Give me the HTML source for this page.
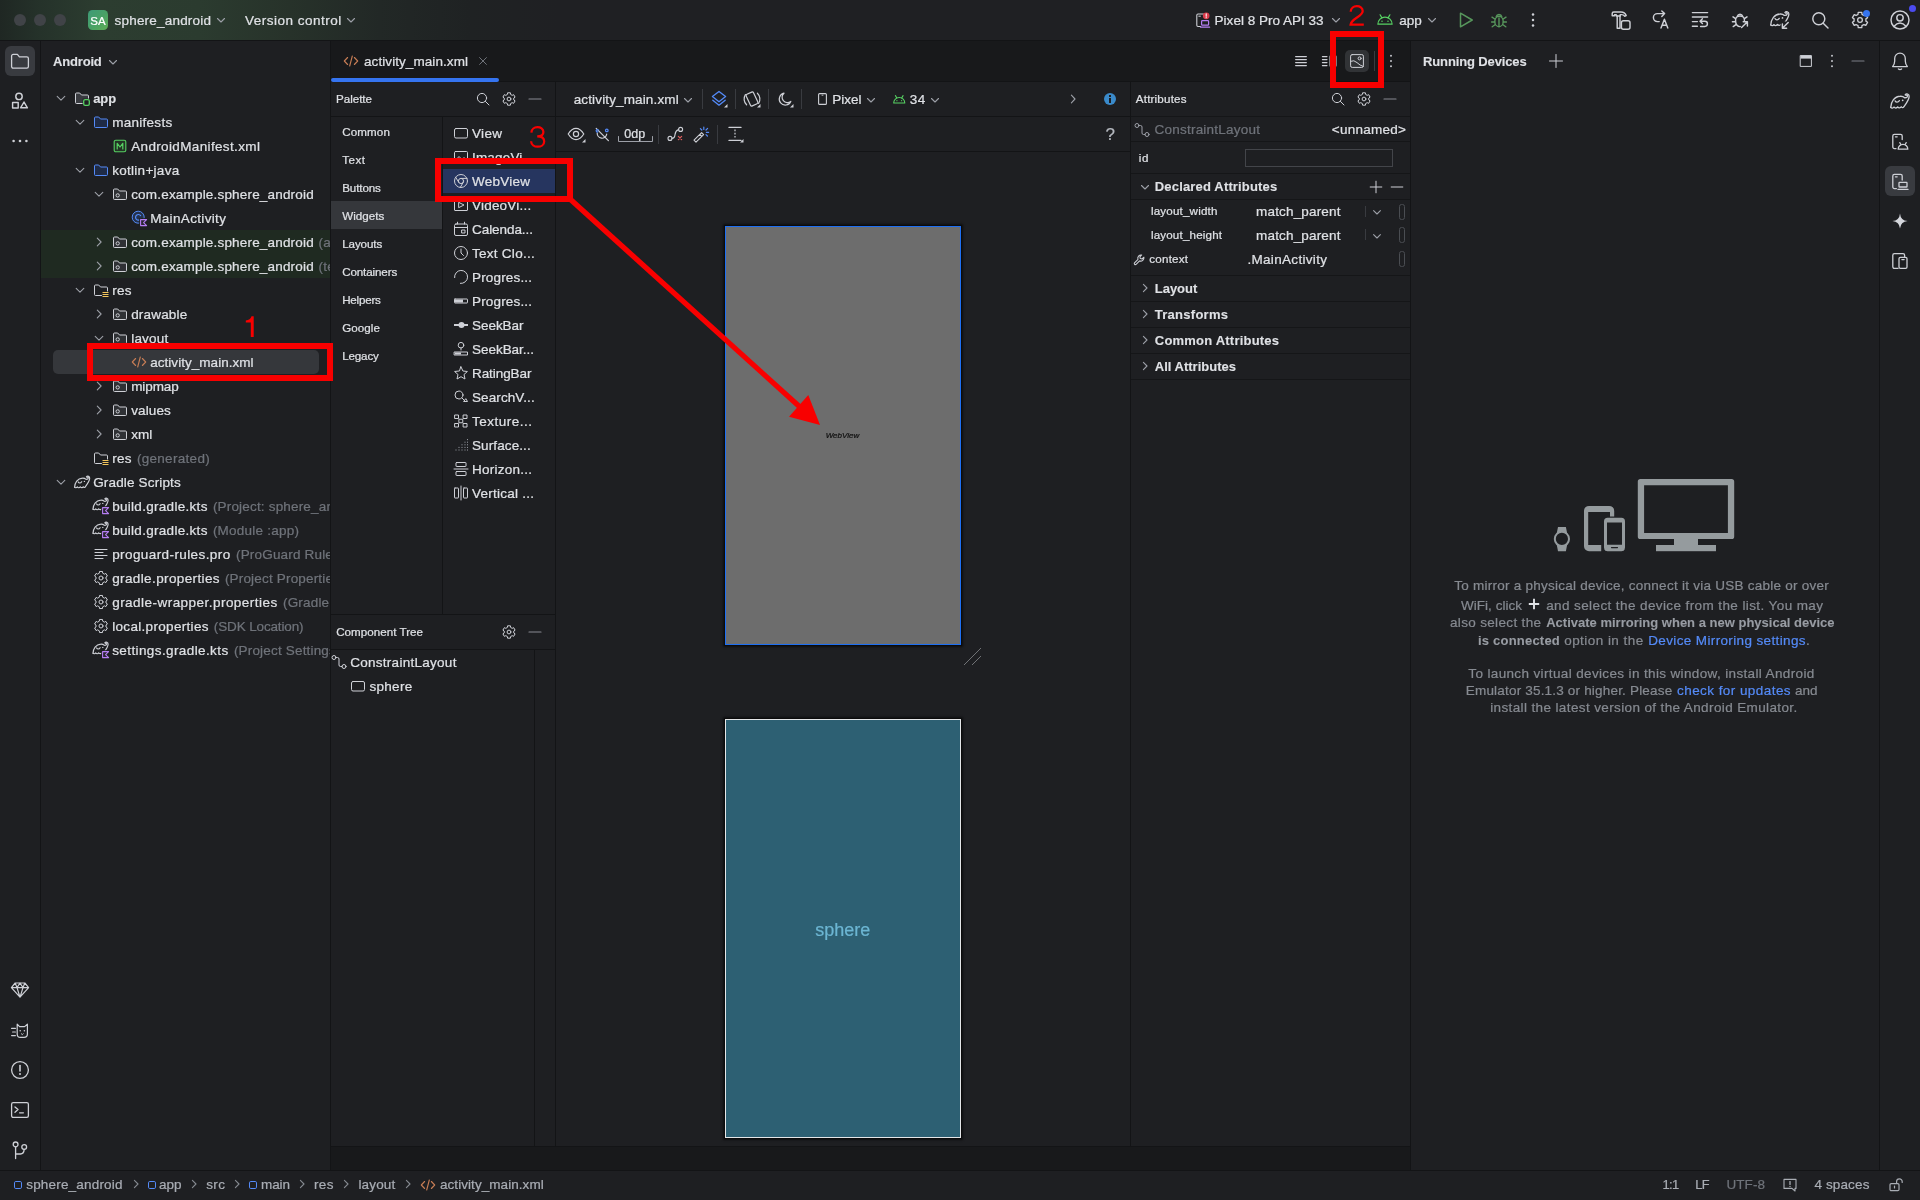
<!DOCTYPE html>
<html><head><meta charset="utf-8"><title>Android Studio</title>
<style>
html,body{margin:0;padding:0;}
body{width:1920px;height:1200px;overflow:hidden;background:#1e1f22;font-family:"Liberation Sans",sans-serif;position:relative;}
svg{overflow:visible}
#root{position:absolute;left:0;top:0;width:1920px;height:1200px;overflow:hidden;will-change:transform;}
</style></head><body><div id="root">
<div style="position:absolute;left:0;top:0;width:1920px;height:40px;background:linear-gradient(90deg,#1f2723 0px,#25322a 40px,#2c3d30 100px,#2b3b2f 200px,#27322a 290px,#222826 380px,#1f2223 470px,#1f2023 560px);"></div>
<div style="position:absolute;left:0px;top:40px;width:1920px;height:1px;background:#131416;"></div>
<div style="position:absolute;left:14px;top:14px;width:12px;height:12px;border-radius:6px;background:#404347"></div>
<div style="position:absolute;left:34px;top:14px;width:12px;height:12px;border-radius:6px;background:#404347"></div>
<div style="position:absolute;left:54px;top:14px;width:12px;height:12px;border-radius:6px;background:#404347"></div>
<div style="position:absolute;left:88px;top:10px;width:20px;height:20px;border-radius:4.5px;background:linear-gradient(135deg,#3d9a78 0%,#4aa265 55%,#5fae55 100%);"></div>
<div style="position:absolute;left:90.3px;top:11.30px;height:20px;line-height:20px;font-size:11.5px;font-weight:400;color:#ffffff;white-space:nowrap;letter-spacing:0.056px;-webkit-text-stroke:0.22px #ffffff;">SA</div>
<div style="position:absolute;left:114.5px;top:11.00px;height:20px;line-height:20px;font-size:13.5px;font-weight:400;color:#dfe1e5;white-space:nowrap;letter-spacing:0.206px;-webkit-text-stroke:0.22px #dfe1e5;">sphere_android</div>
<svg style="position:absolute;left:213.0px;top:12.3px;" width="16" height="16" viewBox="0 0 16 16" fill="none"><path d="M4.5 6.5 L8 10 L11.5 6.5" stroke="#9da0a8" stroke-width="1.1" stroke-linecap="round" stroke-linejoin="round" fill="none" /></svg>
<div style="position:absolute;left:245px;top:11.00px;height:20px;line-height:20px;font-size:13.5px;font-weight:400;color:#dfe1e5;white-space:nowrap;letter-spacing:0.492px;-webkit-text-stroke:0.22px #dfe1e5;">Version control</div>
<svg style="position:absolute;left:343.3px;top:12.3px;" width="16" height="16" viewBox="0 0 16 16" fill="none"><path d="M4.5 6.5 L8 10 L11.5 6.5" stroke="#9da0a8" stroke-width="1.1" stroke-linecap="round" stroke-linejoin="round" fill="none" /></svg>
<svg style="position:absolute;left:1195.4px;top:11.6px;" width="16" height="17" viewBox="0 0 16 17" fill="none"><path d="M5.5 14.5 H3 a1.2 1.2 0 0 1-1.2-1.2 V3.2 A1.2 1.2 0 0 1 3 2 h5.5" stroke="#ced0d6" stroke-width="1.1" stroke-linecap="round" stroke-linejoin="round" fill="none" /><path d="M3.8 4.2 h1.6" stroke="#ced0d6" stroke-width="1" stroke-linecap="round" stroke-linejoin="round" fill="none" /><rect x="6.6" y="8.6" width="7" height="4.6" rx="0.8" stroke="#b57ef3" stroke-width="1.2" stroke-linecap="round" stroke-linejoin="round" fill="none" /><path d="M5.6 15.2 h9" stroke="#b57ef3" stroke-width="1.2" stroke-linecap="round" stroke-linejoin="round" fill="none" /><circle cx="11.2" cy="3.8" r="3.35" fill="#db3b4b"/><path d="M11.2 1.9 V4.2" stroke="#fff" stroke-width="1.1" stroke-linecap="round"/><circle cx="11.2" cy="5.7" r="0.6" fill="#fff"/></svg>
<div style="position:absolute;left:1214.6px;top:11.00px;height:20px;line-height:20px;font-size:13.5px;font-weight:400;color:#dfe1e5;white-space:nowrap;letter-spacing:0.011px;-webkit-text-stroke:0.22px #dfe1e5;">Pixel 8 Pro API 33</div>
<svg style="position:absolute;left:1328.0px;top:12.3px;" width="16" height="16" viewBox="0 0 16 16" fill="none"><path d="M4.5 6.5 L8 10 L11.5 6.5" stroke="#9da0a8" stroke-width="1.1" stroke-linecap="round" stroke-linejoin="round" fill="none" /></svg>
<svg style="position:absolute;left:1377.1px;top:14.3px;" width="16" height="11" viewBox="0 0 16 11" fill="none"><path d="M0.9 10.2 A7.1 7.1 0 0 1 15.1 10.2 Z" stroke="#57d163" stroke-width="1.2" stroke-linecap="round" stroke-linejoin="round" fill="none" /><path d="M3.1 0.8 L4.9 3.9 M12.9 0.8 L11.1 3.9" stroke="#57d163" stroke-width="1.2" stroke-linecap="round" stroke-linejoin="round" fill="none" /><circle cx="5" cy="7.3" r="0.75" fill="#57d163"/><circle cx="11" cy="7.3" r="0.75" fill="#57d163"/></svg>
<div style="position:absolute;left:1399.3px;top:11.00px;height:20px;line-height:20px;font-size:13.5px;font-weight:400;color:#dfe1e5;white-space:nowrap;letter-spacing:-0.016px;-webkit-text-stroke:0.22px #dfe1e5;">app</div>
<svg style="position:absolute;left:1424.0px;top:12.3px;" width="16" height="16" viewBox="0 0 16 16" fill="none"><path d="M4.5 6.5 L8 10 L11.5 6.5" stroke="#9da0a8" stroke-width="1.1" stroke-linecap="round" stroke-linejoin="round" fill="none" /></svg>
<svg style="position:absolute;left:1455.5px;top:10.0px;" width="20" height="20" viewBox="0 0 20 20" fill="none"><path d="M4.5 3.2 L16.2 10 L4.5 16.8 Z" stroke="#57965c" stroke-width="1.5" stroke-linecap="round" stroke-linejoin="round" fill="none" /></svg>
<svg style="position:absolute;left:1489.0px;top:10.0px;" width="20" height="20" viewBox="0 0 20 20" fill="none"><ellipse cx="10" cy="11.5" rx="4.2" ry="5.2" stroke="#57965c" stroke-width="1.4" stroke-linecap="round" stroke-linejoin="round" fill="none" /><path d="M7.2 6.6 A2.9 2.9 0 0 1 12.8 6.6 M10 8 V16.5 M5.8 9 L3 7.2 M14.2 9 L17 7.2 M5.6 12 H2.6 M14.4 12 H17.4 M6 14.8 L3.2 16.8 M14 14.8 L16.8 16.8" stroke="#57965c" stroke-width="1.4" stroke-linecap="round" stroke-linejoin="round" fill="none" /></svg>
<svg style="position:absolute;left:1523.3px;top:10.0px;" width="20" height="20" viewBox="0 0 20 20" fill="none"><circle cx="10" cy="4.6" r="1.25" fill="#ced0d6"/><circle cx="10" cy="10" r="1.25" fill="#ced0d6"/><circle cx="10" cy="15.4" r="1.25" fill="#ced0d6"/></svg>
<svg style="position:absolute;left:1610.5px;top:10.0px;" width="20" height="20" viewBox="0 0 20 20" fill="none"><path d="M1.2 5.8 V3.4 Q1.2 2 2.8 2 H10 Q13.8 2 15.2 5.6 L13.6 6.2 Q12.6 4.6 10.6 4.6 H9.2 V6 H5.2 V4.6 H3.6 V5.8 Z" stroke="#ced0d6" stroke-width="1.45" stroke-linecap="round" stroke-linejoin="round" fill="none" /><path d="M6.2 6 V18.2 H9 V6" stroke="#ced0d6" stroke-width="1.45" stroke-linecap="round" stroke-linejoin="round" fill="none" /><rect x="10.4" y="10.8" width="8.6" height="8.4" rx="2" fill="#1f2023" stroke="#ced0d6" stroke-width="1.45" stroke-linecap="round" stroke-linejoin="round" /></svg>
<svg style="position:absolute;left:1650.5px;top:10.0px;" width="20" height="20" viewBox="0 0 20 20" fill="none"><path d="M8.2 11.6 H6.4 A4 4 0 0 1 6.4 3.6 H13.6 M10.8 0.9 L13.6 3.6 L10.8 6.4" stroke="#ced0d6" stroke-width="1.45" stroke-linecap="round" stroke-linejoin="round" fill="none" /><path d="M10 18 L13.4 9.2 L16.8 18 M11.2 15.2 H15.6" stroke="#ced0d6" stroke-width="1.45" stroke-linecap="round" stroke-linejoin="round" fill="none" /></svg>
<svg style="position:absolute;left:1690.0px;top:10.0px;" width="20" height="20" viewBox="0 0 20 20" fill="none"><path d="M2.4 2.6 H17.6 M2.4 7 H17.6 M2.4 11.6 H7.4 M2.4 16.2 H7.4" stroke="#ced0d6" stroke-width="1.45" stroke-linecap="round" stroke-linejoin="round" fill="none" /><path d="M10.6 16.4 H14.8 A2.6 2.6 0 0 0 14.8 11.2 H10.2 M12.4 8.8 L10 11.2 L12.4 13.6" stroke="#ced0d6" stroke-width="1.45" stroke-linecap="round" stroke-linejoin="round" fill="none" /></svg>
<svg style="position:absolute;left:1730.0px;top:10.0px;" width="20" height="20" viewBox="0 0 20 20" fill="none"><path d="M10.2 16.6 A4.3 5.4 0 0 1 5.6 11.4 V9.6 A4.4 3.6 0 0 1 14.4 9.6 V10.4" stroke="#ced0d6" stroke-width="1.45" stroke-linecap="round" stroke-linejoin="round" fill="none" /><path d="M7.4 6.2 A2.7 2.7 0 0 1 12.6 6.2 M5.6 8.6 L3 6.8 M14.4 8.6 L17 6.8 M5.4 11.8 H2.4 M5.9 14.6 L3.2 16.6" stroke="#ced0d6" stroke-width="1.45" stroke-linecap="round" stroke-linejoin="round" fill="none" /><path d="M11.6 17.6 L17.4 11.8 M13.2 11.8 H17.4 V16" stroke="#ced0d6" stroke-width="1.45" stroke-linecap="round" stroke-linejoin="round" fill="none" /></svg>
<svg style="position:absolute;left:1770px;top:10.5px;" width="20" height="20" viewBox="0 0 20 20" fill="none"><g transform="scale(1.2) translate(0,-1.2)"><path d="M0.6 12.8 C0.8 8.4 3.4 3.9 8.4 3.7 C10 3.6 11.2 4.1 12 4.9 C13.2 5 14.2 4.4 14.4 3.5 C14.5 2.7 13.6 2.4 13.1 3" stroke="#ced0d6" stroke-width="1.08" stroke-linecap="round" stroke-linejoin="round" fill="none" /><path d="M12.4 2.5 C13.4 1.2 15.9 1.8 15.7 4 C15.5 6.4 13.8 9 11.6 12 C11 13.2 9.8 13.3 9.2 12.3 C8.6 13.5 7 13.6 6.3 12.4 C5.6 13.6 4 13.6 3.3 12.5 C2.6 13.6 1.2 13.6 0.6 12.8" stroke="#ced0d6" stroke-width="1.08" stroke-linecap="round" stroke-linejoin="round" fill="none" /><path d="M4.2 7.5 C4.9 8.9 6.6 9 7.7 7.3" stroke="#ced0d6" stroke-width="1.08" stroke-linecap="round" stroke-linejoin="round" fill="none" /><circle cx="10.4" cy="7" r="0.7" fill="#ced0d6"/></g><rect x="10.5" y="10.5" width="9" height="9" fill="#1f2023"/><path d="M18.2 11.4 L12.4 17.2 M12.4 13 V17.2 H16.6" stroke="#ced0d6" stroke-width="1.45" stroke-linecap="round" stroke-linejoin="round" fill="none" /></svg>
<svg style="position:absolute;left:1810.0px;top:10.0px;" width="20" height="20" viewBox="0 0 20 20" fill="none"><circle cx="8.8" cy="8.8" r="6" stroke="#ced0d6" stroke-width="1.45" stroke-linecap="round" stroke-linejoin="round" fill="none" /><path d="M13.2 13.2 L18 18" stroke="#ced0d6" stroke-width="1.45" stroke-linecap="round" stroke-linejoin="round" fill="none" /></svg>
<svg style="position:absolute;left:1850.0px;top:10.0px;" width="20" height="20" viewBox="0 0 20 20" fill="none"><g transform="translate(10,10) scale(1.18) translate(-8,-8)"><path d="M6.49 1.47 L9.51 1.47 L9.66 3.18 L11.35 4.15 L12.90 3.43 L14.41 6.04 L13.01 7.03 L13.01 8.97 L14.41 9.96 L12.90 12.57 L11.35 11.85 L9.66 12.82 L9.51 14.53 L6.49 14.53 L6.34 12.82 L4.65 11.85 L3.10 12.57 L1.59 9.96 L2.99 8.97 L2.99 7.03 L1.59 6.04 L3.10 3.43 L4.65 4.15 L6.34 3.18 Z" stroke="#ced0d6" stroke-width="1.1" stroke-linejoin="round" fill="none"/><circle cx="8" cy="8" r="2.0" stroke="#ced0d6" stroke-width="1.1" stroke-linecap="round" stroke-linejoin="round" fill="none" /></g></svg>
<div style="position:absolute;left:1863px;top:9.8px;width:7px;height:7px;border-radius:3.5px;background:#3574f0"></div>
<svg style="position:absolute;left:1889.5px;top:10.0px;" width="20" height="20" viewBox="0 0 20 20" fill="none"><circle cx="10" cy="10" r="9" stroke="#ced0d6" stroke-width="1.45" stroke-linecap="round" stroke-linejoin="round" fill="none" /><circle cx="10" cy="7.8" r="3.2" stroke="#ced0d6" stroke-width="1.45" stroke-linecap="round" stroke-linejoin="round" fill="none" /><path d="M3.8 16.4 Q10 9.6 16.2 16.4" stroke="#ced0d6" stroke-width="1.45" stroke-linecap="round" stroke-linejoin="round" fill="none" /></svg>
<div style="position:absolute;left:1908.5px;top:4.5px;width:7px;height:7px;border-radius:3.5px;background:#4b4bf0"></div>
<div style="position:absolute;left:40px;top:41px;width:1px;height:1129px;background:#131416;"></div>
<div style="position:absolute;left:5px;top:46px;width:30px;height:30px;background:#393b40;border-radius:6px;"></div>
<svg style="position:absolute;left:10.0px;top:51.0px;" width="20" height="20" viewBox="0 0 20 20" fill="none"><path d="M1.6 5 a1.6 1.6 0 0 1 1.6-1.6 h4.2 l2 2.4 h7.4 a1.6 1.6 0 0 1 1.6 1.6 v8.2 a1.6 1.6 0 0 1-1.6 1.6 h-13.6 a1.6 1.6 0 0 1-1.6-1.6 z" stroke="#ced0d6" stroke-width="1.3" stroke-linecap="round" stroke-linejoin="round" fill="none" /></svg>
<svg style="position:absolute;left:10.0px;top:91.0px;" width="20" height="20" viewBox="0 0 20 20" fill="none"><circle cx="9" cy="5.4" r="3.2" stroke="#ced0d6" stroke-width="1.45" stroke-linecap="round" stroke-linejoin="round" fill="none" /><rect x="2.6" y="11.4" width="5.6" height="5.6" stroke="#ced0d6" stroke-width="1.45" stroke-linecap="round" stroke-linejoin="round" fill="none" /><path d="M14 11 L17.4 16.8 H10.6 Z" stroke="#ced0d6" stroke-width="1.45" stroke-linecap="round" stroke-linejoin="round" fill="none" /></svg>
<svg style="position:absolute;left:10.0px;top:131.0px;" width="20" height="20" viewBox="0 0 20 20" fill="none"><circle cx="3.6" cy="10" r="1.3" fill="#ced0d6"/><circle cx="10" cy="10" r="1.3" fill="#ced0d6"/><circle cx="16.4" cy="10" r="1.3" fill="#ced0d6"/></svg>
<svg style="position:absolute;left:10.0px;top:980.0px;" width="20" height="20" viewBox="0 0 20 20" fill="none"><path d="M5.2 3 H14.8 L18.6 7.6 L10 17.2 L1.4 7.6 Z M1.4 7.6 H18.6 M5.2 3 L7 7.6 L10 17.2 L13 7.6 L14.8 3 M10 3 L7 7.6 M10 3 L13 7.6" stroke="#ced0d6" stroke-width="1.2" stroke-linecap="round" stroke-linejoin="round" fill="none" /></svg>
<svg style="position:absolute;left:10.0px;top:1020.5px;" width="20" height="20" viewBox="0 0 20 20" fill="none"><path d="M7.2 3.2 L9.6 5.6 H14.6 L17.4 3.2 V13 Q17.4 16.4 14 16.4 H10.4 Q7.2 16.4 7.2 13 Z" stroke="#ced0d6" stroke-width="1.2" stroke-linecap="round" stroke-linejoin="round" fill="none" /><path d="M1.6 7.4 H5.4 M2.6 11 H5.4 M1.6 14.6 H5.4" stroke="#ced0d6" stroke-width="1.2" stroke-linecap="round" stroke-linejoin="round" fill="none" /><circle cx="10.2" cy="9.8" r="0.8" fill="#ced0d6"/><circle cx="14.4" cy="9.8" r="0.8" fill="#ced0d6"/><path d="M11.4 12.8 L12.3 13.6 L13.2 12.8" stroke="#ced0d6" stroke-width="1" stroke-linecap="round" stroke-linejoin="round" fill="none" /></svg>
<svg style="position:absolute;left:10.0px;top:1060.0px;" width="20" height="20" viewBox="0 0 20 20" fill="none"><circle cx="10" cy="10" r="8.4" stroke="#ced0d6" stroke-width="1.3" stroke-linecap="round" stroke-linejoin="round" fill="none" /><path d="M10 5.6 V11" stroke="#ced0d6" stroke-width="1.6" stroke-linecap="round" stroke-linejoin="round" fill="none" /><circle cx="10" cy="14" r="1" fill="#ced0d6"/></svg>
<svg style="position:absolute;left:10.0px;top:1100.0px;" width="20" height="20" viewBox="0 0 20 20" fill="none"><rect x="1.6" y="2.6" width="16.8" height="14.8" rx="1.6" stroke="#ced0d6" stroke-width="1.3" stroke-linecap="round" stroke-linejoin="round" fill="none" /><path d="M5 7 L8 9.6 L5 12.2 M9.6 12.8 H13.4" stroke="#ced0d6" stroke-width="1.3" stroke-linecap="round" stroke-linejoin="round" fill="none" /></svg>
<svg style="position:absolute;left:10.0px;top:1139.5px;" width="20" height="20" viewBox="0 0 20 20" fill="none"><circle cx="5.6" cy="4.4" r="2.4" stroke="#ced0d6" stroke-width="1.3" stroke-linecap="round" stroke-linejoin="round" fill="none" /><circle cx="14.2" cy="7" r="2.4" stroke="#ced0d6" stroke-width="1.3" stroke-linecap="round" stroke-linejoin="round" fill="none" /><path d="M5.6 6.8 V18.6 M5.6 14 H10.4 Q13.8 14 14.2 9.4" stroke="#ced0d6" stroke-width="1.3" stroke-linecap="round" stroke-linejoin="round" fill="none" /></svg>
<div style="position:absolute;left:53px;top:52.00px;height:20px;line-height:20px;font-size:13px;font-weight:700;color:#dfe1e5;white-space:nowrap;letter-spacing:-0.171px;-webkit-text-stroke:0.1px #dfe1e5;">Android</div>
<svg style="position:absolute;left:105.0px;top:53.5px;" width="16" height="16" viewBox="0 0 16 16" fill="none"><path d="M4.5 6.5 L8 10 L11.5 6.5" stroke="#9da0a8" stroke-width="1.1" stroke-linecap="round" stroke-linejoin="round" fill="none" /></svg>
<div style="position:absolute;left:41px;top:230px;width:290px;height:48px;background:#1f2a21;"></div>
<div style="position:absolute;left:53px;top:350px;width:266px;height:24px;background:#35373b;border-radius:5px;"></div>
<svg style="position:absolute;left:53.0px;top:90.0px;" width="16" height="16" viewBox="0 0 16 16" fill="none"><path d="M4.2 6.3 L8 10.1 L11.8 6.3" stroke="#9da0a8" stroke-width="1.1" stroke-linecap="round" stroke-linejoin="round" fill="none" /></svg>
<svg style="position:absolute;left:74.2px;top:90px;" width="16" height="16" viewBox="0 0 16 16" fill="none"><path d="M9 13.5 h-6.5 a1 1 0 0 1-1-1 V4 a1 1 0 0 1 1-1 h3.2 l1.8 2 h6 a1 1 0 0 1 1 1 v3" fill="#393b40" stroke="#ced0d6" stroke-width="1" stroke-linecap="round" stroke-linejoin="round" fi/><rect x="8.6" y="8.6" width="7.4" height="7.4" fill="#1e1f22"/><rect x="9.7" y="9.7" width="5.6" height="5.6" rx="1.4" fill="#1e1f22" stroke="#57d163" stroke-width="1.3"/></svg>
<div style="position:absolute;left:93.2px;top:89.00px;height:20px;line-height:20px;font-size:13px;font-weight:700;color:#dfe1e5;white-space:nowrap;letter-spacing:-0.062px;-webkit-text-stroke:0.1px #dfe1e5;">app</div>
<svg style="position:absolute;left:72.0px;top:114.0px;" width="16" height="16" viewBox="0 0 16 16" fill="none"><path d="M4.2 6.3 L8 10.1 L11.8 6.3" stroke="#9da0a8" stroke-width="1.1" stroke-linecap="round" stroke-linejoin="round" fill="none" /></svg>
<svg style="position:absolute;left:93.2px;top:114px;" width="16" height="16" viewBox="0 0 16 16" fill="none"><path d="M1.5 4 a1 1 0 0 1 1-1 h3.2 l1.8 2 h6 a1 1 0 0 1 1 1 v6.5 a1 1 0 0 1-1 1 h-11 a1 1 0 0 1-1-1 z" fill="#1f2b46" stroke="#548af7" stroke-width="1" stroke-linejoin="round"/></svg>
<div style="position:absolute;left:112.2px;top:113.00px;height:20px;line-height:20px;font-size:13.5px;font-weight:400;color:#dfe1e5;white-space:nowrap;letter-spacing:0.277px;-webkit-text-stroke:0.22px #dfe1e5;">manifests</div>
<svg style="position:absolute;left:112.2px;top:138px;" width="16" height="16" viewBox="0 0 16 16" fill="none"><rect x="2.2" y="2.2" width="11.6" height="11.6" rx="1.6" fill="#233325" stroke="#57d163" stroke-width="1.1"/><path d="M5.2 10.9 V5.3 L8 9 L10.8 5.3 V10.9" stroke="#57d163" stroke-width="1.2" stroke-linecap="round" stroke-linejoin="round" fill="none" /></svg>
<div style="position:absolute;left:131.2px;top:137.00px;height:20px;line-height:20px;font-size:13.5px;font-weight:400;color:#dfe1e5;white-space:nowrap;letter-spacing:0.355px;-webkit-text-stroke:0.22px #dfe1e5;">AndroidManifest.xml</div>
<svg style="position:absolute;left:72.0px;top:162.0px;" width="16" height="16" viewBox="0 0 16 16" fill="none"><path d="M4.2 6.3 L8 10.1 L11.8 6.3" stroke="#9da0a8" stroke-width="1.1" stroke-linecap="round" stroke-linejoin="round" fill="none" /></svg>
<svg style="position:absolute;left:93.2px;top:162px;" width="16" height="16" viewBox="0 0 16 16" fill="none"><path d="M1.5 4 a1 1 0 0 1 1-1 h3.2 l1.8 2 h6 a1 1 0 0 1 1 1 v6.5 a1 1 0 0 1-1 1 h-11 a1 1 0 0 1-1-1 z" fill="#1f2b46" stroke="#548af7" stroke-width="1" stroke-linejoin="round"/></svg>
<div style="position:absolute;left:112.2px;top:161.00px;height:20px;line-height:20px;font-size:13.5px;font-weight:400;color:#dfe1e5;white-space:nowrap;letter-spacing:0.283px;-webkit-text-stroke:0.22px #dfe1e5;">kotlin+java</div>
<svg style="position:absolute;left:91.0px;top:186.0px;" width="16" height="16" viewBox="0 0 16 16" fill="none"><path d="M4.2 6.3 L8 10.1 L11.8 6.3" stroke="#9da0a8" stroke-width="1.1" stroke-linecap="round" stroke-linejoin="round" fill="none" /></svg>
<svg style="position:absolute;left:112.2px;top:186px;" width="16" height="16" viewBox="0 0 16 16" fill="none"><path d="M1.5 4 a1 1 0 0 1 1-1 h3.2 l1.8 2 h6 a1 1 0 0 1 1 1 v6.5 a1 1 0 0 1-1 1 h-11 a1 1 0 0 1-1-1 z" fill="#2f3135" stroke="#ced0d6" stroke-width="1" stroke-linejoin="round"/><circle cx="5.7" cy="9.4" r="1.65" fill="none" stroke="#ced0d6" stroke-width="1"/></svg>
<div style="position:absolute;left:131.2px;top:185.00px;height:20px;line-height:20px;font-size:13.5px;font-weight:400;color:#dfe1e5;white-space:nowrap;letter-spacing:0.186px;-webkit-text-stroke:0.22px #dfe1e5;">com.example.sphere_android</div>
<svg style="position:absolute;left:131.2px;top:210px;" width="16" height="16" viewBox="0 0 16 16" fill="none"><circle cx="7.2" cy="7.2" r="6" fill="#25324d" stroke="#548af7" stroke-width="1"/><path d="M9.6 5.6 a2.8 2.8 0 1 0 0 3.4" stroke="#548af7" stroke-width="1.2" stroke-linecap="round" stroke-linejoin="round" fill="none" /><rect x="8.2" y="8.2" width="8" height="8" fill="#1e1f22"/><path d="M9.6 9.6 h6 l-3 3 l3 3 h-6 z" fill="#2b2533" stroke="#b57ef3" stroke-width="1.1" stroke-linejoin="round"/></svg>
<div style="position:absolute;left:150.2px;top:209.00px;height:20px;line-height:20px;font-size:13.5px;font-weight:400;color:#dfe1e5;white-space:nowrap;letter-spacing:0.335px;-webkit-text-stroke:0.22px #dfe1e5;">MainActivity</div>
<svg style="position:absolute;left:91.0px;top:234.0px;" width="16" height="16" viewBox="0 0 16 16" fill="none"><path d="M6.3 4.2 L10.1 8 L6.3 11.8" stroke="#9da0a8" stroke-width="1.1" stroke-linecap="round" stroke-linejoin="round" fill="none" /></svg>
<svg style="position:absolute;left:112.2px;top:234px;" width="16" height="16" viewBox="0 0 16 16" fill="none"><path d="M1.5 4 a1 1 0 0 1 1-1 h3.2 l1.8 2 h6 a1 1 0 0 1 1 1 v6.5 a1 1 0 0 1-1 1 h-11 a1 1 0 0 1-1-1 z" fill="#2f3135" stroke="#ced0d6" stroke-width="1" stroke-linejoin="round"/><circle cx="5.7" cy="9.4" r="1.65" fill="none" stroke="#ced0d6" stroke-width="1"/></svg>
<div style="position:absolute;left:131.2px;top:233.00px;height:20px;line-height:20px;font-size:13.5px;font-weight:400;color:#dfe1e5;white-space:nowrap;letter-spacing:0.186px;-webkit-text-stroke:0.22px #dfe1e5;">com.example.sphere_android</div>
<div style="position:absolute;left:318.6px;top:233.00px;height:20px;line-height:20px;font-size:13.5px;font-weight:400;color:#6f737a;white-space:nowrap;letter-spacing:0.180px;-webkit-text-stroke:0.22px #6f737a;">(androidTest)</div>
<svg style="position:absolute;left:91.0px;top:258.0px;" width="16" height="16" viewBox="0 0 16 16" fill="none"><path d="M6.3 4.2 L10.1 8 L6.3 11.8" stroke="#9da0a8" stroke-width="1.1" stroke-linecap="round" stroke-linejoin="round" fill="none" /></svg>
<svg style="position:absolute;left:112.2px;top:258px;" width="16" height="16" viewBox="0 0 16 16" fill="none"><path d="M1.5 4 a1 1 0 0 1 1-1 h3.2 l1.8 2 h6 a1 1 0 0 1 1 1 v6.5 a1 1 0 0 1-1 1 h-11 a1 1 0 0 1-1-1 z" fill="#2f3135" stroke="#ced0d6" stroke-width="1" stroke-linejoin="round"/><circle cx="5.7" cy="9.4" r="1.65" fill="none" stroke="#ced0d6" stroke-width="1"/></svg>
<div style="position:absolute;left:131.2px;top:257.00px;height:20px;line-height:20px;font-size:13.5px;font-weight:400;color:#dfe1e5;white-space:nowrap;letter-spacing:0.186px;-webkit-text-stroke:0.22px #dfe1e5;">com.example.sphere_android</div>
<div style="position:absolute;left:318.6px;top:257.00px;height:20px;line-height:20px;font-size:13.5px;font-weight:400;color:#6f737a;white-space:nowrap;letter-spacing:0.180px;-webkit-text-stroke:0.22px #6f737a;">(test)</div>
<svg style="position:absolute;left:72.0px;top:282.0px;" width="16" height="16" viewBox="0 0 16 16" fill="none"><path d="M4.2 6.3 L8 10.1 L11.8 6.3" stroke="#9da0a8" stroke-width="1.1" stroke-linecap="round" stroke-linejoin="round" fill="none" /></svg>
<svg style="position:absolute;left:93.2px;top:282px;" width="16" height="16" viewBox="0 0 16 16" fill="none"><path d="M8.5 13.5 h-6 a1 1 0 0 1-1-1 V4 a1 1 0 0 1 1-1 h3.2 l1.8 2 h6 a1 1 0 0 1 1 1 v3" stroke="#ced0d6" stroke-width="1" stroke-linecap="round" stroke-linejoin="round" fill="none" /><path d="M9.5 10.5 h6 M9.5 12.5 h6 M9.5 14.5 h6" stroke="#f2c55c" stroke-width="1.1"/></svg>
<div style="position:absolute;left:112.2px;top:281.00px;height:20px;line-height:20px;font-size:13.5px;font-weight:400;color:#dfe1e5;white-space:nowrap;letter-spacing:0.217px;-webkit-text-stroke:0.22px #dfe1e5;">res</div>
<svg style="position:absolute;left:91.0px;top:306.0px;" width="16" height="16" viewBox="0 0 16 16" fill="none"><path d="M6.3 4.2 L10.1 8 L6.3 11.8" stroke="#9da0a8" stroke-width="1.1" stroke-linecap="round" stroke-linejoin="round" fill="none" /></svg>
<svg style="position:absolute;left:112.2px;top:306px;" width="16" height="16" viewBox="0 0 16 16" fill="none"><path d="M1.5 4 a1 1 0 0 1 1-1 h3.2 l1.8 2 h6 a1 1 0 0 1 1 1 v6.5 a1 1 0 0 1-1 1 h-11 a1 1 0 0 1-1-1 z" fill="#2f3135" stroke="#ced0d6" stroke-width="1" stroke-linejoin="round"/><circle cx="5.7" cy="9.4" r="1.65" fill="none" stroke="#ced0d6" stroke-width="1"/></svg>
<div style="position:absolute;left:131.2px;top:305.00px;height:20px;line-height:20px;font-size:13.5px;font-weight:400;color:#dfe1e5;white-space:nowrap;letter-spacing:0.172px;-webkit-text-stroke:0.22px #dfe1e5;">drawable</div>
<svg style="position:absolute;left:91.0px;top:330.0px;" width="16" height="16" viewBox="0 0 16 16" fill="none"><path d="M4.2 6.3 L8 10.1 L11.8 6.3" stroke="#9da0a8" stroke-width="1.1" stroke-linecap="round" stroke-linejoin="round" fill="none" /></svg>
<svg style="position:absolute;left:112.2px;top:330px;" width="16" height="16" viewBox="0 0 16 16" fill="none"><path d="M1.5 4 a1 1 0 0 1 1-1 h3.2 l1.8 2 h6 a1 1 0 0 1 1 1 v6.5 a1 1 0 0 1-1 1 h-11 a1 1 0 0 1-1-1 z" fill="#2f3135" stroke="#ced0d6" stroke-width="1" stroke-linejoin="round"/><circle cx="5.7" cy="9.4" r="1.65" fill="none" stroke="#ced0d6" stroke-width="1"/></svg>
<div style="position:absolute;left:131.2px;top:329.00px;height:20px;line-height:20px;font-size:13.5px;font-weight:400;color:#dfe1e5;white-space:nowrap;letter-spacing:0.194px;-webkit-text-stroke:0.22px #dfe1e5;">layout</div>
<svg style="position:absolute;left:131.2px;top:354px;" width="16" height="16" viewBox="0 0 16 16" fill="none"><path d="M4.6 4.5 L1.3 8 L4.6 11.5 M11.4 4.5 L14.7 8 L11.4 11.5 M9.3 3 L6.7 13" stroke="#c77d55" stroke-width="1.1" stroke-linecap="round" stroke-linejoin="round" fill="none" /></svg>
<div style="position:absolute;left:150.2px;top:353.00px;height:20px;line-height:20px;font-size:13.5px;font-weight:400;color:#dfe1e5;white-space:nowrap;letter-spacing:0.039px;-webkit-text-stroke:0.22px #dfe1e5;">activity_main.xml</div>
<svg style="position:absolute;left:91.0px;top:378.0px;" width="16" height="16" viewBox="0 0 16 16" fill="none"><path d="M6.3 4.2 L10.1 8 L6.3 11.8" stroke="#9da0a8" stroke-width="1.1" stroke-linecap="round" stroke-linejoin="round" fill="none" /></svg>
<svg style="position:absolute;left:112.2px;top:378px;" width="16" height="16" viewBox="0 0 16 16" fill="none"><path d="M1.5 4 a1 1 0 0 1 1-1 h3.2 l1.8 2 h6 a1 1 0 0 1 1 1 v6.5 a1 1 0 0 1-1 1 h-11 a1 1 0 0 1-1-1 z" fill="#2f3135" stroke="#ced0d6" stroke-width="1" stroke-linejoin="round"/><circle cx="5.7" cy="9.4" r="1.65" fill="none" stroke="#ced0d6" stroke-width="1"/></svg>
<div style="position:absolute;left:131.2px;top:377.00px;height:20px;line-height:20px;font-size:13.5px;font-weight:400;color:#dfe1e5;white-space:nowrap;letter-spacing:-0.103px;-webkit-text-stroke:0.22px #dfe1e5;">mipmap</div>
<svg style="position:absolute;left:91.0px;top:402.0px;" width="16" height="16" viewBox="0 0 16 16" fill="none"><path d="M6.3 4.2 L10.1 8 L6.3 11.8" stroke="#9da0a8" stroke-width="1.1" stroke-linecap="round" stroke-linejoin="round" fill="none" /></svg>
<svg style="position:absolute;left:112.2px;top:402px;" width="16" height="16" viewBox="0 0 16 16" fill="none"><path d="M1.5 4 a1 1 0 0 1 1-1 h3.2 l1.8 2 h6 a1 1 0 0 1 1 1 v6.5 a1 1 0 0 1-1 1 h-11 a1 1 0 0 1-1-1 z" fill="#2f3135" stroke="#ced0d6" stroke-width="1" stroke-linejoin="round"/><circle cx="5.7" cy="9.4" r="1.65" fill="none" stroke="#ced0d6" stroke-width="1"/></svg>
<div style="position:absolute;left:131.2px;top:401.00px;height:20px;line-height:20px;font-size:13.5px;font-weight:400;color:#dfe1e5;white-space:nowrap;letter-spacing:0.114px;-webkit-text-stroke:0.22px #dfe1e5;">values</div>
<svg style="position:absolute;left:91.0px;top:426.0px;" width="16" height="16" viewBox="0 0 16 16" fill="none"><path d="M6.3 4.2 L10.1 8 L6.3 11.8" stroke="#9da0a8" stroke-width="1.1" stroke-linecap="round" stroke-linejoin="round" fill="none" /></svg>
<svg style="position:absolute;left:112.2px;top:426px;" width="16" height="16" viewBox="0 0 16 16" fill="none"><path d="M1.5 4 a1 1 0 0 1 1-1 h3.2 l1.8 2 h6 a1 1 0 0 1 1 1 v6.5 a1 1 0 0 1-1 1 h-11 a1 1 0 0 1-1-1 z" fill="#2f3135" stroke="#ced0d6" stroke-width="1" stroke-linejoin="round"/><circle cx="5.7" cy="9.4" r="1.65" fill="none" stroke="#ced0d6" stroke-width="1"/></svg>
<div style="position:absolute;left:131.2px;top:425.00px;height:20px;line-height:20px;font-size:13.5px;font-weight:400;color:#dfe1e5;white-space:nowrap;letter-spacing:0.000px;-webkit-text-stroke:0.22px #dfe1e5;">xml</div>
<svg style="position:absolute;left:93.2px;top:450px;" width="16" height="16" viewBox="0 0 16 16" fill="none"><path d="M8.5 13.5 h-6 a1 1 0 0 1-1-1 V4 a1 1 0 0 1 1-1 h3.2 l1.8 2 h6 a1 1 0 0 1 1 1 v3" stroke="#ced0d6" stroke-width="1" stroke-linecap="round" stroke-linejoin="round" fill="none" /><path d="M9.5 10.5 h6 M9.5 12.5 h6 M9.5 14.5 h6" stroke="#f2c55c" stroke-width="1.1"/></svg>
<div style="position:absolute;left:112.2px;top:449.00px;height:20px;line-height:20px;font-size:13.5px;font-weight:400;color:#dfe1e5;white-space:nowrap;letter-spacing:0.217px;-webkit-text-stroke:0.22px #dfe1e5;">res</div>
<div style="position:absolute;left:136.9px;top:449.00px;height:20px;line-height:20px;font-size:13.5px;font-weight:400;color:#6f737a;white-space:nowrap;letter-spacing:0.300px;-webkit-text-stroke:0.22px #6f737a;">(generated)</div>
<svg style="position:absolute;left:53.0px;top:474.0px;" width="16" height="16" viewBox="0 0 16 16" fill="none"><path d="M4.2 6.3 L8 10.1 L11.8 6.3" stroke="#9da0a8" stroke-width="1.1" stroke-linecap="round" stroke-linejoin="round" fill="none" /></svg>
<svg style="position:absolute;left:74.2px;top:474px;" width="16" height="16" viewBox="0 0 16 16" fill="none"><g transform="translate(0,0.4)"><path d="M0.6 12.8 C0.8 8.4 3.4 3.9 8.4 3.7 C10 3.6 11.2 4.1 12 4.9 C13.2 5 14.2 4.4 14.4 3.5 C14.5 2.7 13.6 2.4 13.1 3" stroke="#ced0d6" stroke-width="1.15" stroke-linecap="round" stroke-linejoin="round" fill="none" /><path d="M12.4 2.5 C13.4 1.2 15.9 1.8 15.7 4 C15.5 6.4 13.8 9 11.6 12 C11 13.2 9.8 13.3 9.2 12.3 C8.6 13.5 7 13.6 6.3 12.4 C5.6 13.6 4 13.6 3.3 12.5 C2.6 13.6 1.2 13.6 0.6 12.8" stroke="#ced0d6" stroke-width="1.15" stroke-linecap="round" stroke-linejoin="round" fill="none" /><path d="M4.2 7.5 C4.9 8.9 6.6 9 7.7 7.3" stroke="#ced0d6" stroke-width="1.15" stroke-linecap="round" stroke-linejoin="round" fill="none" /><circle cx="10.4" cy="7" r="0.7" fill="#ced0d6"/></g></svg>
<div style="position:absolute;left:93.2px;top:473.00px;height:20px;line-height:20px;font-size:13.5px;font-weight:400;color:#dfe1e5;white-space:nowrap;letter-spacing:0.159px;-webkit-text-stroke:0.22px #dfe1e5;">Gradle Scripts</div>
<svg style="position:absolute;left:93.2px;top:498px;" width="16" height="16" viewBox="0 0 16 16" fill="none"><g transform="translate(-0.6,-1.6)"><path d="M0.6 12.8 C0.8 8.4 3.4 3.9 8.4 3.7 C10 3.6 11.2 4.1 12 4.9 C13.2 5 14.2 4.4 14.4 3.5 C14.5 2.7 13.6 2.4 13.1 3" stroke="#ced0d6" stroke-width="1.15" stroke-linecap="round" stroke-linejoin="round" fill="none" /><path d="M12.4 2.5 C13.4 1.2 15.9 1.8 15.7 4 C15.5 6.4 13.8 9 11.6 12 C11 13.2 9.8 13.3 9.2 12.3 C8.6 13.5 7 13.6 6.3 12.4 C5.6 13.6 4 13.6 3.3 12.5 C2.6 13.6 1.2 13.6 0.6 12.8" stroke="#ced0d6" stroke-width="1.15" stroke-linecap="round" stroke-linejoin="round" fill="none" /><path d="M4.2 7.5 C4.9 8.9 6.6 9 7.7 7.3" stroke="#ced0d6" stroke-width="1.15" stroke-linecap="round" stroke-linejoin="round" fill="none" /><circle cx="10.4" cy="7" r="0.7" fill="#ced0d6"/></g><rect x="8.2" y="8.2" width="8" height="8" fill="#1e1f22"/><path d="M9.6 9.6 h6 l-3 3 l3 3 h-6 z" fill="#2b2533" stroke="#b57ef3" stroke-width="1.1" stroke-linejoin="round"/></svg>
<div style="position:absolute;left:112.2px;top:497.00px;height:20px;line-height:20px;font-size:13.5px;font-weight:400;color:#dfe1e5;white-space:nowrap;letter-spacing:0.293px;-webkit-text-stroke:0.22px #dfe1e5;">build.gradle.kts</div>
<div style="position:absolute;left:212.9px;top:497.00px;height:20px;line-height:20px;font-size:13.5px;font-weight:400;color:#6f737a;white-space:nowrap;letter-spacing:0.180px;-webkit-text-stroke:0.22px #6f737a;">(Project: sphere_android)</div>
<svg style="position:absolute;left:93.2px;top:522px;" width="16" height="16" viewBox="0 0 16 16" fill="none"><g transform="translate(-0.6,-1.6)"><path d="M0.6 12.8 C0.8 8.4 3.4 3.9 8.4 3.7 C10 3.6 11.2 4.1 12 4.9 C13.2 5 14.2 4.4 14.4 3.5 C14.5 2.7 13.6 2.4 13.1 3" stroke="#ced0d6" stroke-width="1.15" stroke-linecap="round" stroke-linejoin="round" fill="none" /><path d="M12.4 2.5 C13.4 1.2 15.9 1.8 15.7 4 C15.5 6.4 13.8 9 11.6 12 C11 13.2 9.8 13.3 9.2 12.3 C8.6 13.5 7 13.6 6.3 12.4 C5.6 13.6 4 13.6 3.3 12.5 C2.6 13.6 1.2 13.6 0.6 12.8" stroke="#ced0d6" stroke-width="1.15" stroke-linecap="round" stroke-linejoin="round" fill="none" /><path d="M4.2 7.5 C4.9 8.9 6.6 9 7.7 7.3" stroke="#ced0d6" stroke-width="1.15" stroke-linecap="round" stroke-linejoin="round" fill="none" /><circle cx="10.4" cy="7" r="0.7" fill="#ced0d6"/></g><rect x="8.2" y="8.2" width="8" height="8" fill="#1e1f22"/><path d="M9.6 9.6 h6 l-3 3 l3 3 h-6 z" fill="#2b2533" stroke="#b57ef3" stroke-width="1.1" stroke-linejoin="round"/></svg>
<div style="position:absolute;left:112.2px;top:521.00px;height:20px;line-height:20px;font-size:13.5px;font-weight:400;color:#dfe1e5;white-space:nowrap;letter-spacing:0.293px;-webkit-text-stroke:0.22px #dfe1e5;">build.gradle.kts</div>
<div style="position:absolute;left:212.9px;top:521.00px;height:20px;line-height:20px;font-size:13.5px;font-weight:400;color:#6f737a;white-space:nowrap;letter-spacing:0.225px;-webkit-text-stroke:0.22px #6f737a;">(Module :app)</div>
<svg style="position:absolute;left:93.2px;top:546px;" width="16" height="16" viewBox="0 0 16 16" fill="none"><path d="M2 3.5 h12 M2 6.5 h8 M2 9.5 h12 M2 12.5 h8" stroke="#ced0d6" stroke-width="1.1" stroke-linecap="round" stroke-linejoin="round" fill="none" /></svg>
<div style="position:absolute;left:112.2px;top:545.00px;height:20px;line-height:20px;font-size:13.5px;font-weight:400;color:#dfe1e5;white-space:nowrap;letter-spacing:0.408px;-webkit-text-stroke:0.22px #dfe1e5;">proguard-rules.pro</div>
<div style="position:absolute;left:236px;top:545.00px;height:20px;line-height:20px;font-size:13.5px;font-weight:400;color:#6f737a;white-space:nowrap;letter-spacing:0.180px;-webkit-text-stroke:0.22px #6f737a;">(ProGuard Rules for ":app")</div>
<svg style="position:absolute;left:93.2px;top:570px;" width="16" height="16" viewBox="0 0 16 16" fill="none"><path d="M6.49 1.47 L9.51 1.47 L9.66 3.18 L11.35 4.15 L12.90 3.43 L14.41 6.04 L13.01 7.03 L13.01 8.97 L14.41 9.96 L12.90 12.57 L11.35 11.85 L9.66 12.82 L9.51 14.53 L6.49 14.53 L6.34 12.82 L4.65 11.85 L3.10 12.57 L1.59 9.96 L2.99 8.97 L2.99 7.03 L1.59 6.04 L3.10 3.43 L4.65 4.15 L6.34 3.18 Z" stroke="#ced0d6" stroke-width="1.0" stroke-linejoin="round" fill="none"/><circle cx="8" cy="8" r="2.0" stroke="#ced0d6" stroke-width="1.0" stroke-linecap="round" stroke-linejoin="round" fill="none" /></svg>
<div style="position:absolute;left:112.2px;top:569.00px;height:20px;line-height:20px;font-size:13.5px;font-weight:400;color:#dfe1e5;white-space:nowrap;letter-spacing:0.380px;-webkit-text-stroke:0.22px #dfe1e5;">gradle.properties</div>
<div style="position:absolute;left:224.9px;top:569.00px;height:20px;line-height:20px;font-size:13.5px;font-weight:400;color:#6f737a;white-space:nowrap;letter-spacing:0.180px;-webkit-text-stroke:0.22px #6f737a;">(Project Properties)</div>
<svg style="position:absolute;left:93.2px;top:594px;" width="16" height="16" viewBox="0 0 16 16" fill="none"><path d="M6.49 1.47 L9.51 1.47 L9.66 3.18 L11.35 4.15 L12.90 3.43 L14.41 6.04 L13.01 7.03 L13.01 8.97 L14.41 9.96 L12.90 12.57 L11.35 11.85 L9.66 12.82 L9.51 14.53 L6.49 14.53 L6.34 12.82 L4.65 11.85 L3.10 12.57 L1.59 9.96 L2.99 8.97 L2.99 7.03 L1.59 6.04 L3.10 3.43 L4.65 4.15 L6.34 3.18 Z" stroke="#ced0d6" stroke-width="1.0" stroke-linejoin="round" fill="none"/><circle cx="8" cy="8" r="2.0" stroke="#ced0d6" stroke-width="1.0" stroke-linecap="round" stroke-linejoin="round" fill="none" /></svg>
<div style="position:absolute;left:112.2px;top:593.00px;height:20px;line-height:20px;font-size:13.5px;font-weight:400;color:#dfe1e5;white-space:nowrap;letter-spacing:0.465px;-webkit-text-stroke:0.22px #dfe1e5;">gradle-wrapper.properties</div>
<div style="position:absolute;left:283px;top:593.00px;height:20px;line-height:20px;font-size:13.5px;font-weight:400;color:#6f737a;white-space:nowrap;letter-spacing:0.180px;-webkit-text-stroke:0.22px #6f737a;">(Gradle Version)</div>
<svg style="position:absolute;left:93.2px;top:618px;" width="16" height="16" viewBox="0 0 16 16" fill="none"><path d="M6.49 1.47 L9.51 1.47 L9.66 3.18 L11.35 4.15 L12.90 3.43 L14.41 6.04 L13.01 7.03 L13.01 8.97 L14.41 9.96 L12.90 12.57 L11.35 11.85 L9.66 12.82 L9.51 14.53 L6.49 14.53 L6.34 12.82 L4.65 11.85 L3.10 12.57 L1.59 9.96 L2.99 8.97 L2.99 7.03 L1.59 6.04 L3.10 3.43 L4.65 4.15 L6.34 3.18 Z" stroke="#ced0d6" stroke-width="1.0" stroke-linejoin="round" fill="none"/><circle cx="8" cy="8" r="2.0" stroke="#ced0d6" stroke-width="1.0" stroke-linecap="round" stroke-linejoin="round" fill="none" /></svg>
<div style="position:absolute;left:112.2px;top:617.00px;height:20px;line-height:20px;font-size:13.5px;font-weight:400;color:#dfe1e5;white-space:nowrap;letter-spacing:0.317px;-webkit-text-stroke:0.22px #dfe1e5;">local.properties</div>
<div style="position:absolute;left:213.8px;top:617.00px;height:20px;line-height:20px;font-size:13.5px;font-weight:400;color:#6f737a;white-space:nowrap;letter-spacing:-0.134px;-webkit-text-stroke:0.22px #6f737a;">(SDK Location)</div>
<svg style="position:absolute;left:93.2px;top:642px;" width="16" height="16" viewBox="0 0 16 16" fill="none"><g transform="translate(-0.6,-1.6)"><path d="M0.6 12.8 C0.8 8.4 3.4 3.9 8.4 3.7 C10 3.6 11.2 4.1 12 4.9 C13.2 5 14.2 4.4 14.4 3.5 C14.5 2.7 13.6 2.4 13.1 3" stroke="#ced0d6" stroke-width="1.15" stroke-linecap="round" stroke-linejoin="round" fill="none" /><path d="M12.4 2.5 C13.4 1.2 15.9 1.8 15.7 4 C15.5 6.4 13.8 9 11.6 12 C11 13.2 9.8 13.3 9.2 12.3 C8.6 13.5 7 13.6 6.3 12.4 C5.6 13.6 4 13.6 3.3 12.5 C2.6 13.6 1.2 13.6 0.6 12.8" stroke="#ced0d6" stroke-width="1.15" stroke-linecap="round" stroke-linejoin="round" fill="none" /><path d="M4.2 7.5 C4.9 8.9 6.6 9 7.7 7.3" stroke="#ced0d6" stroke-width="1.15" stroke-linecap="round" stroke-linejoin="round" fill="none" /><circle cx="10.4" cy="7" r="0.7" fill="#ced0d6"/></g><rect x="8.2" y="8.2" width="8" height="8" fill="#1e1f22"/><path d="M9.6 9.6 h6 l-3 3 l3 3 h-6 z" fill="#2b2533" stroke="#b57ef3" stroke-width="1.1" stroke-linejoin="round"/></svg>
<div style="position:absolute;left:112.2px;top:641.00px;height:20px;line-height:20px;font-size:13.5px;font-weight:400;color:#dfe1e5;white-space:nowrap;letter-spacing:0.399px;-webkit-text-stroke:0.22px #dfe1e5;">settings.gradle.kts</div>
<div style="position:absolute;left:233.9px;top:641.00px;height:20px;line-height:20px;font-size:13.5px;font-weight:400;color:#6f737a;white-space:nowrap;letter-spacing:0.180px;-webkit-text-stroke:0.22px #6f737a;">(Project Settings)</div>
<div style="position:absolute;left:331px;top:41px;width:1079px;height:1129px;background:#1e1f22;"></div>
<div style="position:absolute;left:330px;top:41px;width:1px;height:1129px;background:#131416;"></div>
<div style="position:absolute;left:331px;top:41px;width:1079px;height:41px;background:#18191b;"></div>
<div style="position:absolute;left:331px;top:81px;width:1079px;height:1px;background:#131416;"></div>
<div style="position:absolute;left:331px;top:1147px;width:1079px;height:23px;background:#18191b;"></div>
<div style="position:absolute;left:331px;top:1146px;width:1079px;height:1px;background:#131416;"></div>
<svg style="position:absolute;left:343.2px;top:53px;" width="16" height="16" viewBox="0 0 16 16" fill="none"><path d="M4.6 4.5 L1.3 8 L4.6 11.5 M11.4 4.5 L14.7 8 L11.4 11.5 M9.3 3 L6.7 13" stroke="#c77d55" stroke-width="1.1" stroke-linecap="round" stroke-linejoin="round" fill="none" /></svg>
<div style="position:absolute;left:364px;top:52.00px;height:20px;line-height:20px;font-size:13.5px;font-weight:400;color:#dfe1e5;white-space:nowrap;letter-spacing:0.076px;-webkit-text-stroke:0.22px #dfe1e5;">activity_main.xml</div>
<svg style="position:absolute;left:475.2px;top:53.3px;" width="16" height="16" viewBox="0 0 16 16" fill="none"><path d="M4.6 4.6 L11.4 11.4 M11.4 4.6 L4.6 11.4" stroke="#70747b" stroke-width="1" stroke-linecap="round" stroke-linejoin="round" fill="none" /></svg>
<div style="position:absolute;left:331px;top:78px;width:168px;height:3.5px;background:#3574f0;border-radius:2px;"></div>
<svg style="position:absolute;left:1293.0px;top:53.0px;" width="16" height="16" viewBox="0 0 16 16" fill="none"><path d="M2.6 3.6 H13.4 M2.6 6.6 H13.4 M2.6 9.6 H13.4 M2.6 12.6 H13.4" stroke="#ced0d6" stroke-width="1.1" stroke-linecap="round" stroke-linejoin="round" fill="none" /></svg>
<svg style="position:absolute;left:1320.5px;top:53.0px;" width="16" height="16" viewBox="0 0 16 16" fill="none"><path d="M1.4 3.6 H6 M1.4 6.6 H6 M1.4 9.6 H6 M1.4 12.6 H6" stroke="#ced0d6" stroke-width="1.1" stroke-linecap="round" stroke-linejoin="round" fill="none" /><rect x="9" y="2.6" width="6" height="10.8" rx="1" stroke="#ced0d6" stroke-width="1.1" stroke-linecap="round" stroke-linejoin="round" fill="none" /></svg>
<div style="position:absolute;left:1345px;top:50px;width:24px;height:22px;background:#313336;border-radius:5px;"></div>
<svg style="position:absolute;left:1349.0px;top:53.0px;" width="16" height="16" viewBox="0 0 16 16" fill="none"><rect x="1.6" y="1.6" width="12.8" height="12.8" rx="1.6" stroke="#ced0d6" stroke-width="1" stroke-linecap="round" stroke-linejoin="round" fill="none" /><circle cx="10.6" cy="5.4" r="1.5" stroke="#ced0d6" stroke-width="1" stroke-linecap="round" stroke-linejoin="round" fill="none" /><path d="M1.8 8.2 Q5 6.6 8 9.6 T14.2 13.4" stroke="#ced0d6" stroke-width="1" stroke-linecap="round" stroke-linejoin="round" fill="none" /></svg>
<div style="position:absolute;left:1374px;top:51px;width:1px;height:20px;background:#393b40;"></div>
<svg style="position:absolute;left:1383.0px;top:53.0px;" width="16" height="16" viewBox="0 0 16 16" fill="none"><circle cx="8" cy="2.8" r="0.95" fill="#ced0d6"/><circle cx="8" cy="8" r="0.95" fill="#ced0d6"/><circle cx="8" cy="13.2" r="0.95" fill="#ced0d6"/></svg>
<div style="position:absolute;left:336px;top:89.40px;height:20px;line-height:20px;font-size:11.6px;font-weight:400;color:#dfe1e5;white-space:nowrap;letter-spacing:-0.018px;-webkit-text-stroke:0.22px #dfe1e5;">Palette</div>
<svg style="position:absolute;left:474.8px;top:91.3px;" width="16" height="16" viewBox="0 0 16 16" fill="none"><circle cx="7" cy="7" r="4.6" stroke="#ced0d6" stroke-width="1.0" stroke-linecap="round" stroke-linejoin="round" fill="none" /><path d="M10.4 10.4 L14 14" stroke="#ced0d6" stroke-width="1.0" stroke-linecap="round" stroke-linejoin="round" fill="none" /></svg>
<svg style="position:absolute;left:500.8px;top:91.3px;" width="16" height="16" viewBox="0 0 16 16" fill="none"><path d="M6.57 1.80 L9.43 1.80 L9.58 3.42 L11.18 4.34 L12.66 3.66 L14.09 6.14 L12.76 7.08 L12.76 8.92 L14.09 9.86 L12.66 12.34 L11.18 11.66 L9.58 12.58 L9.43 14.20 L6.57 14.20 L6.42 12.58 L4.82 11.66 L3.34 12.34 L1.91 9.86 L3.24 8.92 L3.24 7.08 L1.91 6.14 L3.34 3.66 L4.82 4.34 L6.42 3.42 Z" stroke="#ced0d6" stroke-width="1" stroke-linejoin="round" fill="none"/><circle cx="8" cy="8" r="1.9" stroke="#ced0d6" stroke-width="1" stroke-linecap="round" stroke-linejoin="round" fill="none" /></svg>
<svg style="position:absolute;left:527.0px;top:91.3px;" width="16" height="16" viewBox="0 0 16 16" fill="none"><path d="M2 8 H14" stroke="#878a91" stroke-width="1.2" stroke-linecap="round" stroke-linejoin="round" fill="none" /></svg>
<div style="position:absolute;left:331px;top:116px;width:224px;height:1px;background:#131416;"></div>
<div style="position:absolute;left:555px;top:82px;width:1px;height:1064px;background:#131416;"></div>
<div style="position:absolute;left:442px;top:117px;width:1px;height:497px;background:#131416;"></div>
<div style="position:absolute;left:331px;top:201px;width:111px;height:28px;background:#35373b;"></div>
<div style="position:absolute;left:342.2px;top:122.10px;height:20px;line-height:20px;font-size:11.6px;font-weight:400;color:#dfe1e5;white-space:nowrap;letter-spacing:0.131px;-webkit-text-stroke:0.22px #dfe1e5;">Common</div>
<div style="position:absolute;left:342.2px;top:150.10px;height:20px;line-height:20px;font-size:11.6px;font-weight:400;color:#dfe1e5;white-space:nowrap;letter-spacing:0.478px;-webkit-text-stroke:0.22px #dfe1e5;">Text</div>
<div style="position:absolute;left:342.2px;top:178.10px;height:20px;line-height:20px;font-size:11.6px;font-weight:400;color:#dfe1e5;white-space:nowrap;letter-spacing:-0.105px;-webkit-text-stroke:0.22px #dfe1e5;">Buttons</div>
<div style="position:absolute;left:342.2px;top:206.10px;height:20px;line-height:20px;font-size:11.6px;font-weight:400;color:#dfe1e5;white-space:nowrap;letter-spacing:0.018px;-webkit-text-stroke:0.22px #dfe1e5;">Widgets</div>
<div style="position:absolute;left:342.2px;top:234.10px;height:20px;line-height:20px;font-size:11.6px;font-weight:400;color:#dfe1e5;white-space:nowrap;letter-spacing:-0.102px;-webkit-text-stroke:0.22px #dfe1e5;">Layouts</div>
<div style="position:absolute;left:342.2px;top:262.10px;height:20px;line-height:20px;font-size:11.6px;font-weight:400;color:#dfe1e5;white-space:nowrap;letter-spacing:-0.120px;-webkit-text-stroke:0.22px #dfe1e5;">Containers</div>
<div style="position:absolute;left:342.2px;top:290.10px;height:20px;line-height:20px;font-size:11.6px;font-weight:400;color:#dfe1e5;white-space:nowrap;letter-spacing:-0.209px;-webkit-text-stroke:0.22px #dfe1e5;">Helpers</div>
<div style="position:absolute;left:342.2px;top:318.10px;height:20px;line-height:20px;font-size:11.6px;font-weight:400;color:#dfe1e5;white-space:nowrap;letter-spacing:0.062px;-webkit-text-stroke:0.22px #dfe1e5;">Google</div>
<div style="position:absolute;left:342.2px;top:346.10px;height:20px;line-height:20px;font-size:11.6px;font-weight:400;color:#dfe1e5;white-space:nowrap;letter-spacing:-0.138px;-webkit-text-stroke:0.22px #dfe1e5;">Legacy</div>
<div style="position:absolute;left:443px;top:169px;width:112px;height:24px;background:#26355f;"></div>
<svg style="position:absolute;left:452.8px;top:125.30000000000001px;" width="16" height="16" viewBox="0 0 16 16" fill="none"><rect x="1.5" y="3.5" width="13" height="9.5" rx="1.5" stroke="#ced0d6" stroke-width="1" stroke-linecap="round" stroke-linejoin="round" fill="none" /></svg>
<div style="position:absolute;left:472px;top:124.30px;height:20px;line-height:20px;font-size:13.5px;font-weight:400;color:#dfe1e5;white-space:nowrap;letter-spacing:0.323px;-webkit-text-stroke:0.22px #dfe1e5;">View</div>
<svg style="position:absolute;left:452.8px;top:149.3px;" width="16" height="16" viewBox="0 0 16 16" fill="none"><rect x="1.5" y="2.5" width="13" height="11" rx="1" stroke="#ced0d6" stroke-width="1" stroke-linecap="round" stroke-linejoin="round" fill="none" /><path d="M2 12 L6 7.5 L9 10.5 L11 8.5 L14 12" stroke="#ced0d6" stroke-width="1" stroke-linecap="round" stroke-linejoin="round" fill="none" /></svg>
<div style="position:absolute;left:472px;top:148.30px;height:20px;line-height:20px;font-size:13.5px;font-weight:400;color:#dfe1e5;white-space:nowrap;letter-spacing:0.180px;-webkit-text-stroke:0.22px #dfe1e5;">ImageVi...</div>
<svg style="position:absolute;left:452.8px;top:173.3px;" width="16" height="16" viewBox="0 0 16 16" fill="none"><circle cx="8" cy="8" r="6.5" stroke="#ced0d6" stroke-width="1" stroke-linecap="round" stroke-linejoin="round" fill="none" /><circle cx="8" cy="8" r="2.6" stroke="#ced0d6" stroke-width="1" stroke-linecap="round" stroke-linejoin="round" fill="none" /><path d="M8 5.4 H14 M5.75 9.3 L2.6 4.2 M10.25 9.3 L7.3 14.4" stroke="#ced0d6" stroke-width="1" stroke-linecap="round" stroke-linejoin="round" fill="none" /></svg>
<div style="position:absolute;left:472px;top:172.30px;height:20px;line-height:20px;font-size:13.5px;font-weight:400;color:#dfe1e5;white-space:nowrap;letter-spacing:0.245px;-webkit-text-stroke:0.22px #dfe1e5;">WebView</div>
<svg style="position:absolute;left:452.8px;top:197.3px;" width="16" height="16" viewBox="0 0 16 16" fill="none"><rect x="1.5" y="2.5" width="13" height="11" rx="0.5" stroke="#ced0d6" stroke-width="1" stroke-linecap="round" stroke-linejoin="round" fill="none" /><path d="M6 5.5 L11 8 L6 10.5 Z" stroke="#ced0d6" stroke-width="1" stroke-linecap="round" stroke-linejoin="round" fill="none" /></svg>
<div style="position:absolute;left:472px;top:196.30px;height:20px;line-height:20px;font-size:13.5px;font-weight:400;color:#dfe1e5;white-space:nowrap;letter-spacing:0.211px;-webkit-text-stroke:0.22px #dfe1e5;">VideoVi...</div>
<svg style="position:absolute;left:452.8px;top:221.3px;" width="16" height="16" viewBox="0 0 16 16" fill="none"><rect x="1.5" y="3" width="13" height="11.5" rx="1.5" stroke="#ced0d6" stroke-width="1" stroke-linecap="round" stroke-linejoin="round" fill="none" /><path d="M1.5 6.5 H14.5 M4.5 1.2 V3 M11.5 1.2 V3" stroke="#ced0d6" stroke-width="1" stroke-linecap="round" stroke-linejoin="round" fill="none" /><rect x="9" y="9" width="3" height="3" stroke="#ced0d6" stroke-width="1" stroke-linecap="round" stroke-linejoin="round" fill="none" /></svg>
<div style="position:absolute;left:472px;top:220.30px;height:20px;line-height:20px;font-size:13.5px;font-weight:400;color:#dfe1e5;white-space:nowrap;letter-spacing:-0.061px;-webkit-text-stroke:0.22px #dfe1e5;">Calenda...</div>
<svg style="position:absolute;left:452.8px;top:245.3px;" width="16" height="16" viewBox="0 0 16 16" fill="none"><circle cx="8" cy="8" r="6.5" stroke="#ced0d6" stroke-width="1" stroke-linecap="round" stroke-linejoin="round" fill="none" /><path d="M8 4 V8 L10.5 10.5" stroke="#ced0d6" stroke-width="1" stroke-linecap="round" stroke-linejoin="round" fill="none" /></svg>
<div style="position:absolute;left:472px;top:244.30px;height:20px;line-height:20px;font-size:13.5px;font-weight:400;color:#dfe1e5;white-space:nowrap;letter-spacing:0.267px;-webkit-text-stroke:0.22px #dfe1e5;">Text Clo...</div>
<svg style="position:absolute;left:452.8px;top:269.3px;" width="16" height="16" viewBox="0 0 16 16" fill="none"><path d="M1.6 8.6 A6.5 6.5 0 1 1 7.4 14.4" stroke="#ced0d6" stroke-width="1" stroke-linecap="round" stroke-linejoin="round" fill="none" /></svg>
<div style="position:absolute;left:472px;top:268.30px;height:20px;line-height:20px;font-size:13.5px;font-weight:400;color:#dfe1e5;white-space:nowrap;letter-spacing:0.163px;-webkit-text-stroke:0.22px #dfe1e5;">Progres...</div>
<svg style="position:absolute;left:452.8px;top:293.3px;" width="16" height="16" viewBox="0 0 16 16" fill="none"><rect x="1.5" y="6" width="13" height="4" rx="0.5" stroke="#ced0d6" stroke-width="1" stroke-linecap="round" stroke-linejoin="round" fill="none" /><rect x="2" y="6.5" width="8" height="3" fill="#ced0d6"/></svg>
<div style="position:absolute;left:472px;top:292.30px;height:20px;line-height:20px;font-size:13.5px;font-weight:400;color:#dfe1e5;white-space:nowrap;letter-spacing:0.163px;-webkit-text-stroke:0.22px #dfe1e5;">Progres...</div>
<svg style="position:absolute;left:452.8px;top:317.3px;" width="16" height="16" viewBox="0 0 16 16" fill="none"><path d="M1 8 H15" stroke="#ced0d6" stroke-width="2"/><circle cx="8.5" cy="8" r="3" fill="#ced0d6"/></svg>
<div style="position:absolute;left:472px;top:316.30px;height:20px;line-height:20px;font-size:13.5px;font-weight:400;color:#dfe1e5;white-space:nowrap;letter-spacing:-0.047px;-webkit-text-stroke:0.22px #dfe1e5;">SeekBar</div>
<svg style="position:absolute;left:452.8px;top:341.3px;" width="16" height="16" viewBox="0 0 16 16" fill="none"><circle cx="8" cy="4.2" r="2.8" stroke="#ced0d6" stroke-width="1" stroke-linecap="round" stroke-linejoin="round" fill="none" /><path d="M8 7 V9" stroke="#ced0d6" stroke-width="1" stroke-linecap="round" stroke-linejoin="round" fill="none" /><rect x="1.5" y="11" width="13" height="3" stroke="#ced0d6" stroke-width="1" stroke-linecap="round" stroke-linejoin="round" fill="none" /><rect x="2" y="11.5" width="6" height="2" fill="#ced0d6"/></svg>
<div style="position:absolute;left:472px;top:340.30px;height:20px;line-height:20px;font-size:13.5px;font-weight:400;color:#dfe1e5;white-space:nowrap;letter-spacing:-0.033px;-webkit-text-stroke:0.22px #dfe1e5;">SeekBar...</div>
<svg style="position:absolute;left:452.8px;top:365.3px;" width="16" height="16" viewBox="0 0 16 16" fill="none"><path d="M8 1.8 L9.9 6 L14.4 6.5 L11 9.5 L12 14 L8 11.7 L4 14 L5 9.5 L1.6 6.5 L6.1 6 Z" stroke="#ced0d6" stroke-width="1" stroke-linecap="round" stroke-linejoin="round" fill="none" /></svg>
<div style="position:absolute;left:472px;top:364.30px;height:20px;line-height:20px;font-size:13.5px;font-weight:400;color:#dfe1e5;white-space:nowrap;letter-spacing:-0.068px;-webkit-text-stroke:0.22px #dfe1e5;">RatingBar</div>
<svg style="position:absolute;left:452.8px;top:389.3px;" width="16" height="16" viewBox="0 0 16 16" fill="none"><circle cx="6" cy="6" r="4" stroke="#ced0d6" stroke-width="1" stroke-linecap="round" stroke-linejoin="round" fill="none" /><path d="M9 9 L12 12 M11 12.5 L14.5 12.5 L13 10 Z" stroke="#ced0d6" stroke-width="1" stroke-linecap="round" stroke-linejoin="round" fill="none" /></svg>
<div style="position:absolute;left:472px;top:388.30px;height:20px;line-height:20px;font-size:13.5px;font-weight:400;color:#dfe1e5;white-space:nowrap;letter-spacing:0.100px;-webkit-text-stroke:0.22px #dfe1e5;">SearchV...</div>
<svg style="position:absolute;left:452.8px;top:413.3px;" width="16" height="16" viewBox="0 0 16 16" fill="none"><rect x="2" y="2" width="3.5" height="3.5" stroke="#ced0d6" stroke-width="1" stroke-linecap="round" stroke-linejoin="round" fill="none" /><rect x="10.5" y="2" width="3.5" height="3.5" stroke="#ced0d6" stroke-width="1" stroke-linecap="round" stroke-linejoin="round" fill="none" /><rect x="2" y="10.5" width="3.5" height="3.5" stroke="#ced0d6" stroke-width="1" stroke-linecap="round" stroke-linejoin="round" fill="none" /><rect x="10.5" y="10.5" width="3.5" height="3.5" stroke="#ced0d6" stroke-width="1" stroke-linecap="round" stroke-linejoin="round" fill="none" /><rect x="6.25" y="6.25" width="3.5" height="3.5" stroke="#ced0d6" stroke-width="1" stroke-linecap="round" stroke-linejoin="round" fill="none" /></svg>
<div style="position:absolute;left:472px;top:412.30px;height:20px;line-height:20px;font-size:13.5px;font-weight:400;color:#dfe1e5;white-space:nowrap;letter-spacing:0.497px;-webkit-text-stroke:0.22px #dfe1e5;">Texture...</div>
<svg style="position:absolute;left:452.8px;top:437.3px;" width="16" height="16" viewBox="0 0 16 16" fill="none"><rect x="2.5" y="12.5" width="1" height="1" fill="#9da0a8"/><rect x="5.5" y="12.5" width="1" height="1" fill="#9da0a8"/><rect x="5.5" y="9.9" width="1" height="1" fill="#9da0a8"/><rect x="8.5" y="12.5" width="1" height="1" fill="#9da0a8"/><rect x="8.5" y="9.9" width="1" height="1" fill="#9da0a8"/><rect x="8.5" y="7.3" width="1" height="1" fill="#9da0a8"/><rect x="11.5" y="12.5" width="1" height="1" fill="#9da0a8"/><rect x="11.5" y="9.9" width="1" height="1" fill="#9da0a8"/><rect x="11.5" y="7.3" width="1" height="1" fill="#9da0a8"/><rect x="11.5" y="4.699999999999999" width="1" height="1" fill="#9da0a8"/><rect x="14.0" y="12.5" width="1" height="1" fill="#9da0a8"/><rect x="14.0" y="9.9" width="1" height="1" fill="#9da0a8"/><rect x="14.0" y="7.3" width="1" height="1" fill="#9da0a8"/><rect x="14.0" y="4.699999999999999" width="1" height="1" fill="#9da0a8"/><rect x="14.0" y="2.0999999999999996" width="1" height="1" fill="#9da0a8"/></svg>
<div style="position:absolute;left:472px;top:436.30px;height:20px;line-height:20px;font-size:13.5px;font-weight:400;color:#dfe1e5;white-space:nowrap;letter-spacing:0.102px;-webkit-text-stroke:0.22px #dfe1e5;">Surface...</div>
<svg style="position:absolute;left:452.8px;top:461.3px;" width="16" height="16" viewBox="0 0 16 16" fill="none"><rect x="3" y="1.5" width="10" height="4" rx="0.5" stroke="#ced0d6" stroke-width="1" stroke-linecap="round" stroke-linejoin="round" fill="none" /><rect x="3" y="10.5" width="10" height="4" rx="0.5" stroke="#ced0d6" stroke-width="1" stroke-linecap="round" stroke-linejoin="round" fill="none" /><path d="M1 8 H15" stroke="#ced0d6" stroke-width="1" stroke-linecap="round" stroke-linejoin="round" fill="none" /></svg>
<div style="position:absolute;left:472px;top:460.30px;height:20px;line-height:20px;font-size:13.5px;font-weight:400;color:#dfe1e5;white-space:nowrap;letter-spacing:0.247px;-webkit-text-stroke:0.22px #dfe1e5;">Horizon...</div>
<svg style="position:absolute;left:452.8px;top:485.3px;" width="16" height="16" viewBox="0 0 16 16" fill="none"><rect x="1.5" y="3" width="4" height="10" rx="0.5" stroke="#ced0d6" stroke-width="1" stroke-linecap="round" stroke-linejoin="round" fill="none" /><rect x="10.5" y="3" width="4" height="10" rx="0.5" stroke="#ced0d6" stroke-width="1" stroke-linecap="round" stroke-linejoin="round" fill="none" /><path d="M8 1 V15" stroke="#ced0d6" stroke-width="1" stroke-linecap="round" stroke-linejoin="round" fill="none" /></svg>
<div style="position:absolute;left:472px;top:484.30px;height:20px;line-height:20px;font-size:13.5px;font-weight:400;color:#dfe1e5;white-space:nowrap;letter-spacing:0.247px;-webkit-text-stroke:0.22px #dfe1e5;">Vertical ...</div>
<div style="position:absolute;left:331px;top:614px;width:224px;height:1px;background:#131416;"></div>
<div style="position:absolute;left:336.2px;top:622.30px;height:20px;line-height:20px;font-size:11.6px;font-weight:400;color:#dfe1e5;white-space:nowrap;letter-spacing:0.034px;-webkit-text-stroke:0.22px #dfe1e5;">Component Tree</div>
<svg style="position:absolute;left:501.0px;top:624.2px;" width="16" height="16" viewBox="0 0 16 16" fill="none"><path d="M6.57 1.80 L9.43 1.80 L9.58 3.42 L11.18 4.34 L12.66 3.66 L14.09 6.14 L12.76 7.08 L12.76 8.92 L14.09 9.86 L12.66 12.34 L11.18 11.66 L9.58 12.58 L9.43 14.20 L6.57 14.20 L6.42 12.58 L4.82 11.66 L3.34 12.34 L1.91 9.86 L3.24 8.92 L3.24 7.08 L1.91 6.14 L3.34 3.66 L4.82 4.34 L6.42 3.42 Z" stroke="#ced0d6" stroke-width="1" stroke-linejoin="round" fill="none"/><circle cx="8" cy="8" r="1.9" stroke="#ced0d6" stroke-width="1" stroke-linecap="round" stroke-linejoin="round" fill="none" /></svg>
<svg style="position:absolute;left:527.0px;top:624.2px;" width="16" height="16" viewBox="0 0 16 16" fill="none"><path d="M2 8 H14" stroke="#878a91" stroke-width="1.2" stroke-linecap="round" stroke-linejoin="round" fill="none" /></svg>
<div style="position:absolute;left:331px;top:649px;width:224px;height:1px;background:#131416;"></div>
<div style="position:absolute;left:534px;top:650px;width:1px;height:496px;background:#131416;"></div>
<svg style="position:absolute;left:331px;top:654.2px;" width="16" height="16" viewBox="0 0 16 16" fill="none"><circle cx="3" cy="3.5" r="2" stroke="#ced0d6" stroke-width="1" stroke-linecap="round" stroke-linejoin="round" fill="none" /><circle cx="13" cy="12.5" r="2" stroke="#ced0d6" stroke-width="1" stroke-linecap="round" stroke-linejoin="round" fill="none" /><path d="M5 3.5 H6.5 Q8 3.5 8 5 V11 Q8 12.5 9.5 12.5 H11" stroke="#ced0d6" stroke-width="1" stroke-linecap="round" stroke-linejoin="round" fill="none" /></svg>
<div style="position:absolute;left:350.2px;top:653.20px;height:20px;line-height:20px;font-size:13.5px;font-weight:400;color:#dfe1e5;white-space:nowrap;letter-spacing:0.276px;-webkit-text-stroke:0.22px #dfe1e5;">ConstraintLayout</div>
<svg style="position:absolute;left:350.2px;top:678.2px;" width="16" height="16" viewBox="0 0 16 16" fill="none"><rect x="1.5" y="3.5" width="13" height="9.5" rx="1.5" stroke="#ced0d6" stroke-width="1" stroke-linecap="round" stroke-linejoin="round" fill="none" /></svg>
<div style="position:absolute;left:369.4px;top:677.20px;height:20px;line-height:20px;font-size:13.5px;font-weight:400;color:#dfe1e5;white-space:nowrap;letter-spacing:0.304px;-webkit-text-stroke:0.22px #dfe1e5;">sphere</div>
<div style="position:absolute;left:556px;top:116px;width:574px;height:1px;background:#131416;"></div>
<div style="position:absolute;left:556px;top:151px;width:574px;height:1px;background:#131416;"></div>
<div style="position:absolute;left:573.7px;top:90.40px;height:20px;line-height:20px;font-size:13.5px;font-weight:400;color:#dfe1e5;white-space:nowrap;letter-spacing:0.139px;-webkit-text-stroke:0.22px #dfe1e5;">activity_main.xml</div>
<svg style="position:absolute;left:680.0px;top:91.8px;" width="16" height="16" viewBox="0 0 16 16" fill="none"><path d="M4.5 6.5 L8 10 L11.5 6.5" stroke="#9da0a8" stroke-width="1.1" stroke-linecap="round" stroke-linejoin="round" fill="none" /></svg>
<div style="position:absolute;left:702px;top:89px;width:1px;height:20px;background:#393b40;"></div>
<div style="position:absolute;left:735px;top:89px;width:1px;height:20px;background:#393b40;"></div>
<div style="position:absolute;left:768px;top:89px;width:1px;height:20px;background:#393b40;"></div>
<div style="position:absolute;left:801px;top:89px;width:1px;height:20px;background:#393b40;"></div>
<svg style="position:absolute;left:709.0px;top:89.4px;" width="20" height="20" viewBox="0 0 20 20" fill="none"><path d="M10 2.4 L16.6 7.6 L10 12.8 L3.4 7.6 Z" stroke="#548af7" stroke-width="1.3" stroke-linecap="round" stroke-linejoin="round" fill="none" /><path d="M3.8 11.2 L10 16.2 L16.2 11.2" stroke="#548af7" stroke-width="1.3" stroke-linecap="round" stroke-linejoin="round" fill="none" /></svg>
<svg style="position:absolute;left:723.7px;top:103.9px" width="3.5" height="3.5"><path d="M3.5 0 V3.5 H0 Z" fill="#ced0d6"/></svg>
<svg style="position:absolute;left:742.0px;top:89.0px;" width="20" height="20" viewBox="0 0 20 20" fill="none"><rect x="6" y="3.6" width="8" height="12.8" rx="1.4" transform="rotate(-25 10 10)" stroke="#ced0d6" stroke-width="1.2" stroke-linecap="round" stroke-linejoin="round" fill="none" /><path d="M3.4 5.6 A8 8 0 0 0 4.6 15.8 M16.6 14.4 A8 8 0 0 0 15.4 4.2" stroke="#ced0d6" stroke-width="1.2" stroke-linecap="round" stroke-linejoin="round" fill="none" /></svg>
<svg style="position:absolute;left:756.7px;top:103.9px" width="3.5" height="3.5"><path d="M3.5 0 V3.5 H0 Z" fill="#ced0d6"/></svg>
<svg style="position:absolute;left:774.5px;top:89.0px;" width="20" height="20" viewBox="0 0 20 20" fill="none"><path d="M9 4.2 A6 6 0 1 0 15.8 12.4 A5 5 0 0 1 9 4.2 Z" stroke="#ced0d6" stroke-width="1.2" stroke-linecap="round" stroke-linejoin="round" fill="none" /></svg>
<svg style="position:absolute;left:789.7px;top:103.9px" width="3.5" height="3.5"><path d="M3.5 0 V3.5 H0 Z" fill="#ced0d6"/></svg>
<svg style="position:absolute;left:817.5px;top:93px;" width="9" height="12" viewBox="0 0 9 12" fill="none"><rect x="0.6" y="0.6" width="7.8" height="10.8" rx="1" stroke="#ced0d6" stroke-width="1.1" stroke-linecap="round" stroke-linejoin="round" fill="none" /><path d="M3.6 2.2 H5.4" stroke="#ced0d6" stroke-width="0.9"/></svg>
<div style="position:absolute;left:832.3px;top:90.40px;height:20px;line-height:20px;font-size:13.5px;font-weight:400;color:#dfe1e5;white-space:nowrap;letter-spacing:-0.016px;-webkit-text-stroke:0.22px #dfe1e5;">Pixel</div>
<svg style="position:absolute;left:863.0px;top:91.8px;" width="16" height="16" viewBox="0 0 16 16" fill="none"><path d="M4.5 6.5 L8 10 L11.5 6.5" stroke="#9da0a8" stroke-width="1.1" stroke-linecap="round" stroke-linejoin="round" fill="none" /></svg>
<svg style="position:absolute;left:893px;top:94.6px;" width="12.5" height="8.6" viewBox="0 0 16 11" fill="none"><path d="M0.9 10.2 A7.1 7.1 0 0 1 15.1 10.2 Z" stroke="#57d163" stroke-width="1.4" stroke-linecap="round" stroke-linejoin="round" fill="none" /><path d="M3.1 0.8 L4.9 3.9 M12.9 0.8 L11.1 3.9" stroke="#57d163" stroke-width="1.4" stroke-linecap="round" stroke-linejoin="round" fill="none" /><circle cx="5" cy="7.3" r="0.75" fill="#57d163"/><circle cx="11" cy="7.3" r="0.75" fill="#57d163"/></svg>
<div style="position:absolute;left:909.7px;top:90.40px;height:20px;line-height:20px;font-size:13.5px;font-weight:400;color:#dfe1e5;white-space:nowrap;letter-spacing:0.569px;-webkit-text-stroke:0.22px #dfe1e5;">34</div>
<svg style="position:absolute;left:927.0px;top:91.8px;" width="16" height="16" viewBox="0 0 16 16" fill="none"><path d="M4.5 6.5 L8 10 L11.5 6.5" stroke="#9da0a8" stroke-width="1.1" stroke-linecap="round" stroke-linejoin="round" fill="none" /></svg>
<svg style="position:absolute;left:1064.8px;top:91.3px;" width="16" height="16" viewBox="0 0 16 16" fill="none"><path d="M6.4 4.2 L10 8 L6.4 11.8" stroke="#9da0a8" stroke-width="1.1" stroke-linecap="round" stroke-linejoin="round" fill="none" /></svg>
<div style="position:absolute;left:1103.8px;top:92.8px;width:12.4px;height:12.4px;border-radius:6.2px;background:#3a8aca"></div>
<div style="position:absolute;left:1109.2px;top:98px;width:1.7px;height:5px;background:#1e1f22;"></div>
<div style="position:absolute;left:1109.2px;top:95px;width:1.7px;height:1.8px;background:#1e1f22;"></div>
<svg style="position:absolute;left:566.0px;top:123.5px;" width="20" height="20" viewBox="0 0 20 20" fill="none"><path d="M2.2 10 Q5.8 4.4 10 4.4 T17.8 10 Q14.2 15.6 10 15.6 T2.2 10 Z" stroke="#ced0d6" stroke-width="1.2" stroke-linecap="round" stroke-linejoin="round" fill="none" /><circle cx="10" cy="10" r="2.6" stroke="#ced0d6" stroke-width="1.2" stroke-linecap="round" stroke-linejoin="round" fill="none" /></svg>
<svg style="position:absolute;left:581.5px;top:139.0px" width="3.5" height="3.5"><path d="M3.5 0 V3.5 H0 Z" fill="#ced0d6"/></svg>
<svg style="position:absolute;left:592.0px;top:123.5px;" width="20" height="20" viewBox="0 0 20 20" fill="none"><path d="M5.2 9 A4.8 5 0 0 0 14.7 10.2" stroke="#ced0d6" stroke-width="1.2" stroke-linecap="round" stroke-linejoin="round" fill="none" /><path d="M4.2 4.4 L16.4 16.6" stroke="#ced0d6" stroke-width="1.2" stroke-linecap="round" stroke-linejoin="round" fill="none" /><path d="M6.3 6 A1.2 1.2 0 1 0 6 7.8" stroke="#548af7" stroke-width="1.2" stroke-linecap="round" stroke-linejoin="round" fill="none" /><circle cx="14.8" cy="6.4" r="1.3" stroke="#548af7" stroke-width="1.2" stroke-linecap="round" stroke-linejoin="round" fill="none" /></svg>
<div style="position:absolute;left:624.3px;top:123.80px;height:20px;line-height:20px;font-size:12.5px;font-weight:400;color:#dfe1e5;white-space:nowrap;letter-spacing:-0.030px;-webkit-text-stroke:0.22px #dfe1e5;">0dp</div>
<svg style="position:absolute;left:618px;top:136px" width="35" height="7"><path d="M0.5 0.5 V5.5 H34.5 V0.5" stroke="#9da0a8" stroke-width="1" stroke-linecap="round" stroke-linejoin="round" fill="none" /></svg>
<div style="position:absolute;left:658px;top:124.5px;width:1px;height:19.0px;background:#393b40;"></div>
<div style="position:absolute;left:717px;top:124.5px;width:1px;height:19.0px;background:#393b40;"></div>
<svg style="position:absolute;left:665.5px;top:123.5px;" width="20" height="20" viewBox="0 0 20 20" fill="none"><circle cx="4" cy="14.4" r="2" stroke="#ced0d6" stroke-width="1.1" stroke-linecap="round" stroke-linejoin="round" fill="none" /><circle cx="14.6" cy="5.4" r="2" stroke="#ced0d6" stroke-width="1.1" stroke-linecap="round" stroke-linejoin="round" fill="none" /><path d="M6 14.4 Q8.6 14.4 9 10.6 T12.6 5.6" stroke="#ced0d6" stroke-width="1.1" stroke-linecap="round" stroke-linejoin="round" fill="none" /><path d="M12.4 12.4 L15.6 15.6 M15.6 12.4 L12.4 15.6" stroke="#db5c5c" stroke-width="1.3" stroke-linecap="round" stroke-linejoin="round" fill="none" /></svg>
<svg style="position:absolute;left:691.0px;top:123.5px;" width="20" height="20" viewBox="0 0 20 20" fill="none"><path d="M3 16.2 L10.6 8.6 L12.6 10.6 L5 18.2 Z M8.8 10.4 L10.8 12.4" stroke="#ced0d6" stroke-width="1.1" stroke-linecap="round" stroke-linejoin="round" fill="none" /><path d="M12.8 3 V5.4 M16.6 4.4 L15 6 M17.6 8.4 H15.4 M16.4 12 L15 10.6 M9.4 4.6 L10.8 6" stroke="#548af7" stroke-width="1.2" stroke-linecap="round" stroke-linejoin="round" fill="none" /></svg>
<svg style="position:absolute;left:724.5px;top:123.5px;" width="20" height="20" viewBox="0 0 20 20" fill="none"><path d="M4 3.4 H16 M4 16.4 H16" stroke="#ced0d6" stroke-width="1.3" stroke-linecap="round" stroke-linejoin="round" fill="none" /><path d="M10 5.6 V14.4" stroke="#ced0d6" stroke-width="1.2" stroke-dasharray="1.6 1.6"/></svg>
<svg style="position:absolute;left:739.5px;top:138.7px" width="3.5" height="3.5"><path d="M3.5 0 V3.5 H0 Z" fill="#ced0d6"/></svg>
<div style="position:absolute;left:1105.6px;top:125.00px;height:20px;line-height:20px;font-size:17px;font-weight:400;color:#b4b8bf;white-space:nowrap;letter-spacing:0.227px;-webkit-text-stroke:0.22px #b4b8bf;">?</div>
<div style="position:absolute;left:724px;top:225px;width:238px;height:421px;background:#0b0b0c;box-shadow:0 0 2px 1px rgba(0,0,0,.55)"></div>
<div style="position:absolute;left:725px;top:226px;width:236px;height:419px;box-sizing:border-box;background:#6d6d6d;border:1px solid #1e6ff2"></div>
<div style="position:absolute;left:825.7px;top:426.00px;height:20px;line-height:20px;font-size:8px;font-weight:400;color:#111111;white-space:nowrap;letter-spacing:0.017px;-webkit-text-stroke:0.22px #111111;font-style:italic;">WebView</div>
<svg style="position:absolute;left:962px;top:646px" width="22" height="22"><path d="M2 19 L19 2 M10 19 L19 10" stroke="#707275" stroke-width="1"/></svg>
<div style="position:absolute;left:724px;top:718px;width:238px;height:421px;background:#0b0b0c;box-shadow:0 0 2px 1px rgba(0,0,0,.55)"></div>
<div style="position:absolute;left:725px;top:719px;width:236px;height:419px;box-sizing:border-box;background:#2d6073;border:1px solid #e4e6e8"></div>
<div style="position:absolute;left:815.2px;top:920.00px;height:20px;line-height:20px;font-size:18px;font-weight:400;color:#6cb6d3;white-space:nowrap;letter-spacing:-0.009px;-webkit-text-stroke:0.22px #6cb6d3;">sphere</div>
<div style="position:absolute;left:1130px;top:82px;width:1px;height:1064px;background:#131416;"></div>
<div style="position:absolute;left:1135.8px;top:89.40px;height:20px;line-height:20px;font-size:11.6px;font-weight:400;color:#dfe1e5;white-space:nowrap;letter-spacing:0.191px;-webkit-text-stroke:0.22px #dfe1e5;">Attributes</div>
<svg style="position:absolute;left:1329.7px;top:91.3px;" width="16" height="16" viewBox="0 0 16 16" fill="none"><circle cx="7" cy="7" r="4.6" stroke="#ced0d6" stroke-width="1.0" stroke-linecap="round" stroke-linejoin="round" fill="none" /><path d="M10.4 10.4 L14 14" stroke="#ced0d6" stroke-width="1.0" stroke-linecap="round" stroke-linejoin="round" fill="none" /></svg>
<svg style="position:absolute;left:1355.8px;top:91.3px;" width="16" height="16" viewBox="0 0 16 16" fill="none"><path d="M6.57 1.80 L9.43 1.80 L9.58 3.42 L11.18 4.34 L12.66 3.66 L14.09 6.14 L12.76 7.08 L12.76 8.92 L14.09 9.86 L12.66 12.34 L11.18 11.66 L9.58 12.58 L9.43 14.20 L6.57 14.20 L6.42 12.58 L4.82 11.66 L3.34 12.34 L1.91 9.86 L3.24 8.92 L3.24 7.08 L1.91 6.14 L3.34 3.66 L4.82 4.34 L6.42 3.42 Z" stroke="#ced0d6" stroke-width="1" stroke-linejoin="round" fill="none"/><circle cx="8" cy="8" r="1.9" stroke="#ced0d6" stroke-width="1" stroke-linecap="round" stroke-linejoin="round" fill="none" /></svg>
<svg style="position:absolute;left:1382.0px;top:91.3px;" width="16" height="16" viewBox="0 0 16 16" fill="none"><path d="M2 8 H14" stroke="#878a91" stroke-width="1.2" stroke-linecap="round" stroke-linejoin="round" fill="none" /></svg>
<div style="position:absolute;left:1131px;top:116px;width:279px;height:1px;background:#151618;"></div>
<div style="position:absolute;left:1131px;top:141px;width:279px;height:1px;background:#151618;"></div>
<div style="position:absolute;left:1131px;top:173px;width:279px;height:1px;background:#151618;"></div>
<div style="position:absolute;left:1131px;top:199px;width:279px;height:1px;background:#151618;"></div>
<div style="position:absolute;left:1131px;top:275px;width:279px;height:1px;background:#151618;"></div>
<div style="position:absolute;left:1131px;top:301px;width:279px;height:1px;background:#151618;"></div>
<div style="position:absolute;left:1131px;top:327px;width:279px;height:1px;background:#151618;"></div>
<div style="position:absolute;left:1131px;top:353px;width:279px;height:1px;background:#151618;"></div>
<div style="position:absolute;left:1131px;top:379px;width:279px;height:1px;background:#151618;"></div>
<svg style="position:absolute;left:1134.3px;top:121.5px;" width="16" height="16" viewBox="0 0 16 16" fill="none"><circle cx="3" cy="3.5" r="2" stroke="#9da0a8" stroke-width="1" stroke-linecap="round" stroke-linejoin="round" fill="none" /><circle cx="13" cy="12.5" r="2" stroke="#9da0a8" stroke-width="1" stroke-linecap="round" stroke-linejoin="round" fill="none" /><path d="M5 3.5 H6.5 Q8 3.5 8 5 V11 Q8 12.5 9.5 12.5 H11" stroke="#9da0a8" stroke-width="1" stroke-linecap="round" stroke-linejoin="round" fill="none" /></svg>
<div style="position:absolute;left:1154.5px;top:120.40px;height:20px;line-height:20px;font-size:13.5px;font-weight:400;color:#6f737a;white-space:nowrap;letter-spacing:0.229px;-webkit-text-stroke:0.22px #6f737a;">ConstraintLayout</div>
<div style="position:absolute;left:1331.8px;top:120.40px;height:20px;line-height:20px;font-size:13.5px;font-weight:400;color:#dfe1e5;white-space:nowrap;letter-spacing:0.242px;-webkit-text-stroke:0.22px #dfe1e5;">&lt;unnamed&gt;</div>
<div style="position:absolute;left:1138.7px;top:148.00px;height:20px;line-height:20px;font-size:11.6px;font-weight:400;color:#dfe1e5;white-space:nowrap;letter-spacing:0.769px;-webkit-text-stroke:0.22px #dfe1e5;">id</div>
<div style="position:absolute;left:1245px;top:149px;width:148px;height:18px;box-sizing:border-box;border:1px solid #43454a;"></div>
<svg style="position:absolute;left:1137.0px;top:178.6px;" width="16" height="16" viewBox="0 0 16 16" fill="none"><path d="M4.5 6.5 L8 10 L11.5 6.5" stroke="#9da0a8" stroke-width="1.1" stroke-linecap="round" stroke-linejoin="round" fill="none" /></svg>
<div style="position:absolute;left:1154.8px;top:177.40px;height:20px;line-height:20px;font-size:13px;font-weight:700;color:#dfe1e5;white-space:nowrap;letter-spacing:0.165px;-webkit-text-stroke:0.1px #dfe1e5;">Declared Attributes</div>
<svg style="position:absolute;left:1367.5px;top:178.5px;" width="16" height="16" viewBox="0 0 16 16" fill="none"><path d="M2.2 8 H13.8 M8 2.2 V13.8" stroke="#ced0d6" stroke-width="1.0" stroke-linecap="round" stroke-linejoin="round" fill="none" /></svg>
<svg style="position:absolute;left:1389.3px;top:178.5px;" width="16" height="16" viewBox="0 0 16 16" fill="none"><path d="M2.2 8 H13.8" stroke="#ced0d6" stroke-width="1.0" stroke-linecap="round" stroke-linejoin="round" fill="none" /></svg>
<div style="position:absolute;left:1150.9px;top:200.70px;height:20px;line-height:20px;font-size:11.6px;font-weight:400;color:#dfe1e5;white-space:nowrap;letter-spacing:0.186px;-webkit-text-stroke:0.22px #dfe1e5;">layout_width</div>
<div style="position:absolute;left:1256.1px;top:201.60px;height:20px;line-height:20px;font-size:13.5px;font-weight:400;color:#dfe1e5;white-space:nowrap;letter-spacing:0.158px;-webkit-text-stroke:0.22px #dfe1e5;">match_parent</div>
<div style="position:absolute;left:1150.9px;top:224.60px;height:20px;line-height:20px;font-size:11.6px;font-weight:400;color:#dfe1e5;white-space:nowrap;letter-spacing:0.176px;-webkit-text-stroke:0.22px #dfe1e5;">layout_height</div>
<div style="position:absolute;left:1256.1px;top:225.50px;height:20px;line-height:20px;font-size:13.5px;font-weight:400;color:#dfe1e5;white-space:nowrap;letter-spacing:0.158px;-webkit-text-stroke:0.22px #dfe1e5;">match_parent</div>
<div style="position:absolute;left:1365px;top:205.5px;width:1px;height:11.0px;background:#393b40;"></div>
<svg style="position:absolute;left:1368.8px;top:204.3px;" width="16" height="16" viewBox="0 0 16 16" fill="none"><path d="M4.6 6.6 L8 10 L11.4 6.6" stroke="#9da0a8" stroke-width="1.1" stroke-linecap="round" stroke-linejoin="round" fill="none" /></svg>
<div style="position:absolute;left:1399px;top:203.5px;width:5.5px;height:16px;box-sizing:border-box;border:1px solid #4a4d52;border-radius:2.5px"></div>
<div style="position:absolute;left:1365px;top:229.4px;width:1px;height:11.0px;background:#393b40;"></div>
<svg style="position:absolute;left:1368.8px;top:228.20000000000002px;" width="16" height="16" viewBox="0 0 16 16" fill="none"><path d="M4.6 6.6 L8 10 L11.4 6.6" stroke="#9da0a8" stroke-width="1.1" stroke-linecap="round" stroke-linejoin="round" fill="none" /></svg>
<div style="position:absolute;left:1399px;top:227.4px;width:5.5px;height:16px;box-sizing:border-box;border:1px solid #4a4d52;border-radius:2.5px"></div>
<div style="position:absolute;left:1399px;top:251.39999999999998px;width:5.5px;height:16px;box-sizing:border-box;border:1px solid #4a4d52;border-radius:2.5px"></div>
<svg style="position:absolute;left:1133.2px;top:253.6px;" width="12" height="12" viewBox="0 0 12 12" fill="none"><path d="M10.9 3.2 A3.3 3.3 0 0 1 6.5 6.9 L3.1 10.4 A1.15 1.15 0 0 1 1.5 8.8 L5 5.4 A3.3 3.3 0 0 1 8.7 1 L6.9 2.9 L7.3 4.6 L9 5 Z" stroke="#ced0d6" stroke-width="1.05" stroke-linecap="round" stroke-linejoin="round" fill="none" /></svg>
<div style="position:absolute;left:1149.3px;top:249.40px;height:20px;line-height:20px;font-size:11.6px;font-weight:400;color:#dfe1e5;white-space:nowrap;letter-spacing:0.218px;-webkit-text-stroke:0.22px #dfe1e5;">context</div>
<div style="position:absolute;left:1247.4px;top:250.00px;height:20px;line-height:20px;font-size:13.5px;font-weight:400;color:#dfe1e5;white-space:nowrap;letter-spacing:0.318px;-webkit-text-stroke:0.22px #dfe1e5;">.MainActivity</div>
<svg style="position:absolute;left:1136.6px;top:280.4px;" width="16" height="16" viewBox="0 0 16 16" fill="none"><path d="M6.4 4.4 L10 8 L6.4 11.6" stroke="#9da0a8" stroke-width="1.1" stroke-linecap="round" stroke-linejoin="round" fill="none" /></svg>
<div style="position:absolute;left:1154.8px;top:279.40px;height:20px;line-height:20px;font-size:13px;font-weight:700;color:#dfe1e5;white-space:nowrap;letter-spacing:-0.025px;-webkit-text-stroke:0.1px #dfe1e5;">Layout</div>
<svg style="position:absolute;left:1136.6px;top:306.2px;" width="16" height="16" viewBox="0 0 16 16" fill="none"><path d="M6.4 4.4 L10 8 L6.4 11.6" stroke="#9da0a8" stroke-width="1.1" stroke-linecap="round" stroke-linejoin="round" fill="none" /></svg>
<div style="position:absolute;left:1154.8px;top:305.20px;height:20px;line-height:20px;font-size:13px;font-weight:700;color:#dfe1e5;white-space:nowrap;letter-spacing:0.265px;-webkit-text-stroke:0.1px #dfe1e5;">Transforms</div>
<svg style="position:absolute;left:1136.6px;top:332.3px;" width="16" height="16" viewBox="0 0 16 16" fill="none"><path d="M6.4 4.4 L10 8 L6.4 11.6" stroke="#9da0a8" stroke-width="1.1" stroke-linecap="round" stroke-linejoin="round" fill="none" /></svg>
<div style="position:absolute;left:1154.8px;top:331.30px;height:20px;line-height:20px;font-size:13px;font-weight:700;color:#dfe1e5;white-space:nowrap;letter-spacing:0.209px;-webkit-text-stroke:0.1px #dfe1e5;">Common Attributes</div>
<svg style="position:absolute;left:1136.6px;top:358.3px;" width="16" height="16" viewBox="0 0 16 16" fill="none"><path d="M6.4 4.4 L10 8 L6.4 11.6" stroke="#9da0a8" stroke-width="1.1" stroke-linecap="round" stroke-linejoin="round" fill="none" /></svg>
<div style="position:absolute;left:1154.8px;top:357.30px;height:20px;line-height:20px;font-size:13px;font-weight:700;color:#dfe1e5;white-space:nowrap;letter-spacing:0.005px;-webkit-text-stroke:0.1px #dfe1e5;">All Attributes</div>
<div style="position:absolute;left:1411px;top:41px;width:468px;height:1129px;background:#1e1f22;"></div>
<div style="position:absolute;left:1410px;top:41px;width:1px;height:1129px;background:#131416;"></div>
<div style="position:absolute;left:1423px;top:52.20px;height:20px;line-height:20px;font-size:13px;font-weight:700;color:#dfe1e5;white-space:nowrap;letter-spacing:-0.126px;-webkit-text-stroke:0.1px #dfe1e5;">Running Devices</div>
<svg style="position:absolute;left:1547.5px;top:52.5px;" width="16" height="16" viewBox="0 0 16 16" fill="none"><path d="M1.5 8 H14.5 M8 1.5 V14.5" stroke="#ced0d6" stroke-width="1.0" stroke-linecap="round" stroke-linejoin="round" fill="none" /></svg>
<svg style="position:absolute;left:1800px;top:55px;" width="12" height="12" viewBox="0 0 12 12" fill="none"><rect x="0.6" y="0.6" width="10.8" height="10.8" stroke="#ced0d6" stroke-width="1" stroke-linecap="round" stroke-linejoin="round" fill="none" /><rect x="0.6" y="0.6" width="10.8" height="3" fill="#ced0d6"/></svg>
<svg style="position:absolute;left:1824.0px;top:53.0px;" width="16" height="16" viewBox="0 0 16 16" fill="none"><circle cx="8" cy="2.8" r="0.95" fill="#ced0d6"/><circle cx="8" cy="8" r="0.95" fill="#ced0d6"/><circle cx="8" cy="13.2" r="0.95" fill="#ced0d6"/></svg>
<svg style="position:absolute;left:1850.2px;top:53.0px;" width="16" height="16" viewBox="0 0 16 16" fill="none"><path d="M2 8 H14" stroke="#7a7e85" stroke-width="1.2" stroke-linecap="round" stroke-linejoin="round" fill="none" /></svg>
<svg style="position:absolute;left:1540px;top:470px" width="210" height="90" viewBox="0 0 210 90"><path fill-rule="evenodd" fill="#959b9e" d="M100.4 9 H191.6 a2.6 2.6 0 0 1 2.6 2.6 V66.5 a2.6 2.6 0 0 1-2.6 2.6 H100.4 a2.6 2.6 0 0 1-2.6-2.6 V11.6 a2.6 2.6 0 0 1 2.6-2.6 Z M104.1 15.3 V62.9 H187.9 V15.3 Z"/><rect x="134" y="69" width="24" height="6.2" fill="#959b9e"/><rect x="116" y="75" width="60" height="6.2" fill="#959b9e"/><path fill-rule="evenodd" fill="#959b9e" d="M49 35.9 H69.2 a5 5 0 0 1 5 5 V46.4 H70 V42 H48.2 V75 H61.2 V81.2 H49 a5 5 0 0 1-5-5 V40.9 a5 5 0 0 1 5-5 Z"/><path fill-rule="evenodd" fill="#959b9e" d="M67.6 47.8 H81.4 a3.6 3.6 0 0 1 3.6 3.6 V77.6 a3.6 3.6 0 0 1-3.6 3.6 H67.6 a3.6 3.6 0 0 1-3.6-3.6 V51.4 a3.6 3.6 0 0 1 3.6-3.6 Z M67 52.5 V74.7 H82 V52.5 Z M71.5 77 a0.6 0.6 0 0 0 0 1.2 H77.5 a0.6 0.6 0 0 0 0-1.2 Z"/><path fill="#959b9e" d="M18 56.9 H25.9 L27.2 63.4 H16.7 Z M16.7 74.6 H27.2 L25.9 81.2 H18 Z"/><circle cx="21.9" cy="68.9" r="7.1" fill="#1e1f22" stroke="#959b9e" stroke-width="2"/></svg>
<div style="position:absolute;left:1454.2px;top:576.30px;height:20px;line-height:20px;font-size:13.5px;font-weight:400;color:#868a91;white-space:nowrap;letter-spacing:0.253px;-webkit-text-stroke:0.22px #868a91;">To mirror a physical device, connect it via USB cable or over</div>
<div style="position:absolute;left:1461px;top:596.00px;height:20px;line-height:20px;font-size:13.5px;font-weight:400;color:#868a91;white-space:nowrap;letter-spacing:0.025px;-webkit-text-stroke:0.22px #868a91;">WiFi, click</div>
<svg style="position:absolute;left:1526.0px;top:596.0px;" width="16" height="16" viewBox="0 0 16 16" fill="none"><path d="M2.8 8 H13.2 M8 2.8 V13.2" stroke="#dfe1e5" stroke-width="1.9" fill="none"/></svg>
<div style="position:absolute;left:1546.2px;top:596.00px;height:20px;line-height:20px;font-size:13.5px;font-weight:400;color:#868a91;white-space:nowrap;letter-spacing:0.399px;-webkit-text-stroke:0.22px #868a91;">and select the device from the list. You may</div>
<div style="position:absolute;left:1450px;top:613.40px;height:20px;line-height:20px;font-size:13.5px;font-weight:400;color:#868a91;white-space:nowrap;letter-spacing:0.335px;-webkit-text-stroke:0.22px #868a91;">also select the</div>
<div style="position:absolute;left:1546.2px;top:613.40px;height:20px;line-height:20px;font-size:13px;font-weight:700;color:#989ca3;white-space:nowrap;letter-spacing:0.003px;-webkit-text-stroke:0.1px #989ca3;">Activate mirroring when a new physical device</div>
<div style="position:absolute;left:1478px;top:630.50px;height:20px;line-height:20px;font-size:13px;font-weight:700;color:#989ca3;white-space:nowrap;letter-spacing:0.212px;-webkit-text-stroke:0.1px #989ca3;">is connected</div>
<div style="position:absolute;left:1564.2px;top:630.50px;height:20px;line-height:20px;font-size:13.5px;font-weight:400;color:#868a91;white-space:nowrap;letter-spacing:0.453px;-webkit-text-stroke:0.22px #868a91;">option in the</div>
<div style="position:absolute;left:1648.2px;top:630.50px;height:20px;line-height:20px;font-size:13.5px;font-weight:400;color:#548af7;white-space:nowrap;letter-spacing:0.369px;-webkit-text-stroke:0.22px #548af7;">Device Mirroring settings</div>
<div style="position:absolute;left:1806px;top:630.50px;height:20px;line-height:20px;font-size:13.5px;font-weight:400;color:#868a91;white-space:nowrap;letter-spacing:0.180px;-webkit-text-stroke:0.22px #868a91;">.</div>
<div style="position:absolute;left:1468.3px;top:664.20px;height:20px;line-height:20px;font-size:13.5px;font-weight:400;color:#868a91;white-space:nowrap;letter-spacing:0.363px;-webkit-text-stroke:0.22px #868a91;">To launch virtual devices in this window, install Android</div>
<div style="position:absolute;left:1465.8px;top:681.20px;height:20px;line-height:20px;font-size:13.5px;font-weight:400;color:#868a91;white-space:nowrap;letter-spacing:0.188px;-webkit-text-stroke:0.22px #868a91;">Emulator 35.1.3 or higher. Please</div>
<div style="position:absolute;left:1677px;top:681.20px;height:20px;line-height:20px;font-size:13.5px;font-weight:400;color:#548af7;white-space:nowrap;letter-spacing:0.439px;-webkit-text-stroke:0.22px #548af7;">check for updates</div>
<div style="position:absolute;left:1795px;top:681.20px;height:20px;line-height:20px;font-size:13.5px;font-weight:400;color:#868a91;white-space:nowrap;letter-spacing:0.034px;-webkit-text-stroke:0.22px #868a91;">and</div>
<div style="position:absolute;left:1490.2px;top:698.30px;height:20px;line-height:20px;font-size:13.5px;font-weight:400;color:#868a91;white-space:nowrap;letter-spacing:0.377px;-webkit-text-stroke:0.22px #868a91;">install the latest version of the Android Emulator.</div>
<div style="position:absolute;left:1880px;top:41px;width:40px;height:1129px;background:#1e1f22;"></div>
<div style="position:absolute;left:1879px;top:41px;width:1px;height:1129px;background:#131416;"></div>
<svg style="position:absolute;left:1890.0px;top:51.0px;" width="20" height="20" viewBox="0 0 20 20" fill="none"><path d="M2.6 15.6 Q4.7 13.2 4.7 10 V7.4 A5.3 5.3 0 0 1 15.3 7.4 V10 Q15.3 13.2 17.4 15.6 Z" stroke="#ced0d6" stroke-width="1.3" stroke-linecap="round" stroke-linejoin="round" fill="none" /><path d="M8.4 18 Q10 19.2 11.6 18" stroke="#ced0d6" stroke-width="1.3" stroke-linecap="round" stroke-linejoin="round" fill="none" /></svg>
<svg style="position:absolute;left:1890px;top:92px;" width="20" height="18" viewBox="0 0 20 18" fill="none"><g transform="scale(1.22) translate(0,-0.2)"><path d="M0.6 12.8 C0.8 8.4 3.4 3.9 8.4 3.7 C10 3.6 11.2 4.1 12 4.9 C13.2 5 14.2 4.4 14.4 3.5 C14.5 2.7 13.6 2.4 13.1 3" stroke="#ced0d6" stroke-width="1.07" stroke-linecap="round" stroke-linejoin="round" fill="none" /><path d="M12.4 2.5 C13.4 1.2 15.9 1.8 15.7 4 C15.5 6.4 13.8 9 11.6 12 C11 13.2 9.8 13.3 9.2 12.3 C8.6 13.5 7 13.6 6.3 12.4 C5.6 13.6 4 13.6 3.3 12.5 C2.6 13.6 1.2 13.6 0.6 12.8" stroke="#ced0d6" stroke-width="1.07" stroke-linecap="round" stroke-linejoin="round" fill="none" /><path d="M4.2 7.5 C4.9 8.9 6.6 9 7.7 7.3" stroke="#ced0d6" stroke-width="1.07" stroke-linecap="round" stroke-linejoin="round" fill="none" /><circle cx="10.4" cy="7" r="0.7" fill="#ced0d6"/></g></svg>
<svg style="position:absolute;left:1890.0px;top:131.5px;" width="20" height="20" viewBox="0 0 20 20" fill="none"><path d="M6 16.6 H4.4 A1.6 1.6 0 0 1 2.8 15 V4 A1.6 1.6 0 0 1 4.4 2.4 H10.6 A1.6 1.6 0 0 1 12.2 4 V7.6" stroke="#ced0d6" stroke-width="1.3" stroke-linecap="round" stroke-linejoin="round" fill="none" /><path d="M5.4 4.8 H7.2" stroke="#ced0d6" stroke-width="1.2" stroke-linecap="round" stroke-linejoin="round" fill="none" /><path d="M8.2 17.2 A4.8 4.8 0 0 1 17.8 17.2 Z" stroke="#ced0d6" stroke-width="1.3" stroke-linecap="round" stroke-linejoin="round" fill="none" /><path d="M9.8 10.6 L10.8 12.4 M16.2 10.6 L15.2 12.4" stroke="#ced0d6" stroke-width="1.2" stroke-linecap="round" stroke-linejoin="round" fill="none" /></svg>
<div style="position:absolute;left:1885px;top:166px;width:30px;height:30px;background:#393b40;border-radius:6px;"></div>
<svg style="position:absolute;left:1890.0px;top:171.5px;" width="20" height="20" viewBox="0 0 20 20" fill="none"><path d="M6.4 16.6 H4.4 A1.6 1.6 0 0 1 2.8 15 V4 A1.6 1.6 0 0 1 4.4 2.4 H10.6 A1.6 1.6 0 0 1 12.2 4 V8" stroke="#ced0d6" stroke-width="1.3" stroke-linecap="round" stroke-linejoin="round" fill="none" /><path d="M5.4 4.8 H7.2" stroke="#ced0d6" stroke-width="1.2" stroke-linecap="round" stroke-linejoin="round" fill="none" /><rect x="9" y="10.4" width="8" height="4.6" rx="0.6" stroke="#ced0d6" stroke-width="1.3" stroke-linecap="round" stroke-linejoin="round" fill="none" /><path d="M8 17.4 H18" stroke="#ced0d6" stroke-width="1.3" stroke-linecap="round" stroke-linejoin="round" fill="none" /></svg>
<svg style="position:absolute;left:1890.0px;top:211.0px;" width="20" height="20" viewBox="0 0 20 20" fill="none"><path d="M10 2.4 Q10.6 9.4 17.6 10 Q10.6 10.6 10 17.6 Q9.4 10.6 2.4 10 Q9.4 9.4 10 2.4 Z" fill="#d5d7dd"/></svg>
<svg style="position:absolute;left:1890.0px;top:251.0px;" width="20" height="20" viewBox="0 0 20 20" fill="none"><path d="M8 17.4 H4.4 A1.6 1.6 0 0 1 2.8 15.8 V4.2 A1.6 1.6 0 0 1 4.4 2.6 H13 A1.6 1.6 0 0 1 14.6 4.2 V5.6" stroke="#ced0d6" stroke-width="1.3" stroke-linecap="round" stroke-linejoin="round" fill="none" /><rect x="9" y="6.4" width="8" height="11" rx="1.4" stroke="#ced0d6" stroke-width="1.3" stroke-linecap="round" stroke-linejoin="round" fill="none" /><path d="M11.8 8.6 H14.2" stroke="#ced0d6" stroke-width="1.1" stroke-linecap="round" stroke-linejoin="round" fill="none" /></svg>
<div style="position:absolute;left:0px;top:1170px;width:1920px;height:30px;background:#1e1f22;"></div>
<div style="position:absolute;left:0px;top:1170px;width:1920px;height:1px;background:#131416;"></div>
<div style="position:absolute;left:14px;top:1181px;width:8.4px;height:8.4px;box-sizing:border-box;border:1.4px solid #548af7;border-radius:1.8px"></div>
<div style="position:absolute;left:26.2px;top:1174.70px;height:20px;line-height:20px;font-size:13.5px;font-weight:400;color:#a9adb4;white-space:nowrap;letter-spacing:0.190px;-webkit-text-stroke:0.22px #a9adb4;">sphere_android</div>
<svg style="position:absolute;left:127.5px;top:1175.7px;" width="16" height="16" viewBox="0 0 16 16" fill="none"><path d="M6.4 4.4 L10 8 L6.4 11.6" stroke="#868a91" stroke-width="1.1" stroke-linecap="round" stroke-linejoin="round" fill="none" /></svg>
<div style="position:absolute;left:147.5px;top:1181px;width:8.4px;height:8.4px;box-sizing:border-box;border:1.4px solid #548af7;border-radius:1.8px"></div>
<div style="position:absolute;left:159px;top:1174.70px;height:20px;line-height:20px;font-size:13.5px;font-weight:400;color:#a9adb4;white-space:nowrap;letter-spacing:0.034px;-webkit-text-stroke:0.22px #a9adb4;">app</div>
<svg style="position:absolute;left:186.2px;top:1175.7px;" width="16" height="16" viewBox="0 0 16 16" fill="none"><path d="M6.4 4.4 L10 8 L6.4 11.6" stroke="#868a91" stroke-width="1.1" stroke-linecap="round" stroke-linejoin="round" fill="none" /></svg>
<div style="position:absolute;left:206.2px;top:1174.70px;height:20px;line-height:20px;font-size:13.5px;font-weight:400;color:#a9adb4;white-space:nowrap;letter-spacing:0.400px;-webkit-text-stroke:0.22px #a9adb4;">src</div>
<svg style="position:absolute;left:229.0px;top:1175.7px;" width="16" height="16" viewBox="0 0 16 16" fill="none"><path d="M6.4 4.4 L10 8 L6.4 11.6" stroke="#868a91" stroke-width="1.1" stroke-linecap="round" stroke-linejoin="round" fill="none" /></svg>
<div style="position:absolute;left:249px;top:1181px;width:8.4px;height:8.4px;box-sizing:border-box;border:1.4px solid #548af7;border-radius:1.8px"></div>
<div style="position:absolute;left:261px;top:1174.70px;height:20px;line-height:20px;font-size:13.5px;font-weight:400;color:#a9adb4;white-space:nowrap;letter-spacing:-0.089px;-webkit-text-stroke:0.22px #a9adb4;">main</div>
<svg style="position:absolute;left:294.0px;top:1175.7px;" width="16" height="16" viewBox="0 0 16 16" fill="none"><path d="M6.4 4.4 L10 8 L6.4 11.6" stroke="#868a91" stroke-width="1.1" stroke-linecap="round" stroke-linejoin="round" fill="none" /></svg>
<div style="position:absolute;left:314px;top:1174.70px;height:20px;line-height:20px;font-size:13.5px;font-weight:400;color:#a9adb4;white-space:nowrap;letter-spacing:0.317px;-webkit-text-stroke:0.22px #a9adb4;">res</div>
<svg style="position:absolute;left:337.7px;top:1175.7px;" width="16" height="16" viewBox="0 0 16 16" fill="none"><path d="M6.4 4.4 L10 8 L6.4 11.6" stroke="#868a91" stroke-width="1.1" stroke-linecap="round" stroke-linejoin="round" fill="none" /></svg>
<div style="position:absolute;left:358.4px;top:1174.70px;height:20px;line-height:20px;font-size:13.5px;font-weight:400;color:#a9adb4;white-space:nowrap;letter-spacing:0.174px;-webkit-text-stroke:0.22px #a9adb4;">layout</div>
<svg style="position:absolute;left:399.6px;top:1175.7px;" width="16" height="16" viewBox="0 0 16 16" fill="none"><path d="M6.4 4.4 L10 8 L6.4 11.6" stroke="#868a91" stroke-width="1.1" stroke-linecap="round" stroke-linejoin="round" fill="none" /></svg>
<svg style="position:absolute;left:420px;top:1176.8px;" width="16" height="16" viewBox="0 0 16 16" fill="none"><path d="M4.6 4.5 L1.3 8 L4.6 11.5 M11.4 4.5 L14.7 8 L11.4 11.5 M9.3 3 L6.7 13" stroke="#c77d55" stroke-width="1.1" stroke-linecap="round" stroke-linejoin="round" fill="none" /></svg>
<div style="position:absolute;left:440px;top:1174.70px;height:20px;line-height:20px;font-size:13.5px;font-weight:400;color:#a9adb4;white-space:nowrap;letter-spacing:0.057px;-webkit-text-stroke:0.22px #a9adb4;">activity_main.xml</div>
<div style="position:absolute;left:1662.6px;top:1174.70px;height:20px;line-height:20px;font-size:13px;font-weight:400;color:#a9adb4;white-space:nowrap;letter-spacing:-0.750px;-webkit-text-stroke:0.22px #a9adb4;">1:1</div>
<div style="position:absolute;left:1695.2px;top:1174.70px;height:20px;line-height:20px;font-size:12.8px;font-weight:400;color:#a9adb4;white-space:nowrap;letter-spacing:-0.600px;-webkit-text-stroke:0.22px #a9adb4;">LF</div>
<div style="position:absolute;left:1726.4px;top:1174.70px;height:20px;line-height:20px;font-size:13.5px;font-weight:400;color:#6f737a;white-space:nowrap;letter-spacing:0.088px;-webkit-text-stroke:0.22px #6f737a;">UTF-8</div>
<svg style="position:absolute;left:1783px;top:1177.5px;" width="14" height="14" viewBox="0 0 14 14" fill="none"><path d="M1 1.4 H13 V10.4 H12 V13 L9 10.4 H1 Z" stroke="#a9adb4" stroke-width="1.1" stroke-linecap="round" stroke-linejoin="round" fill="none" /><path d="M7 3.6 V6.4" stroke="#a9adb4" stroke-width="1.3" stroke-linecap="round" stroke-linejoin="round" fill="none" /><circle cx="7" cy="8.4" r="0.7" fill="#a9adb4"/></svg>
<div style="position:absolute;left:1814.4px;top:1174.70px;height:20px;line-height:20px;font-size:13.5px;font-weight:400;color:#a9adb4;white-space:nowrap;letter-spacing:0.136px;-webkit-text-stroke:0.22px #a9adb4;">4 spaces</div>
<svg style="position:absolute;left:1888.5px;top:1176.5px;" width="15" height="15" viewBox="0 0 15 15" fill="none"><rect x="1" y="6.6" width="9" height="7" rx="1.2" stroke="#a9adb4" stroke-width="1.2" stroke-linecap="round" stroke-linejoin="round" fill="none" /><path d="M5.5 9 V11" stroke="#a9adb4" stroke-width="1.2" stroke-linecap="round" stroke-linejoin="round" fill="none" /><path d="M7.6 6.4 V4.6 A2.8 2.8 0 0 1 13.2 4.6 V5.4" stroke="#a9adb4" stroke-width="1.2" stroke-linecap="round" stroke-linejoin="round" fill="none" /></svg>
<svg style="position:absolute;left:0;top:0" width="1920" height="1200" viewBox="0 0 1920 1200"><rect x="90" y="346" width="240" height="32" fill="none" stroke="#f80000" stroke-width="6"/><rect x="1333" y="34" width="48" height="51" fill="none" stroke="#f80000" stroke-width="6"/><rect x="438" y="161" width="132" height="38" fill="none" stroke="#f80000" stroke-width="6"/><path d="M570 199 L801 408" stroke="#f80000" stroke-width="5.3"/><path d="M820 425 L808.3 395 L789 416.7 Z" fill="#f80000"/><path d="M253.7 316.3 V336.9 H250.8 V322.5 H245.8 V320.4 Q250.4 320.2 251.5 316.3 Z" fill="#f80000"/><path d="M1350.7 11.8 C1350.9 4.3 1362.7 4.5 1362.7 11 C1362.7 16.8 1351.4 18.2 1350.6 24.7 H1363.8" fill="none" stroke="#f80000" stroke-width="2.25"/><path d="M531.4 132.6 C531.6 125.4 543.4 125.6 543.4 132 C543.4 135 541 136.4 537.2 136.4 C541.6 136.4 544.2 138 544.2 141.4 C544.2 148.4 531.3 148.6 531.1 141.2" fill="none" stroke="#f80000" stroke-width="2.25"/></svg>
</div></body></html>
